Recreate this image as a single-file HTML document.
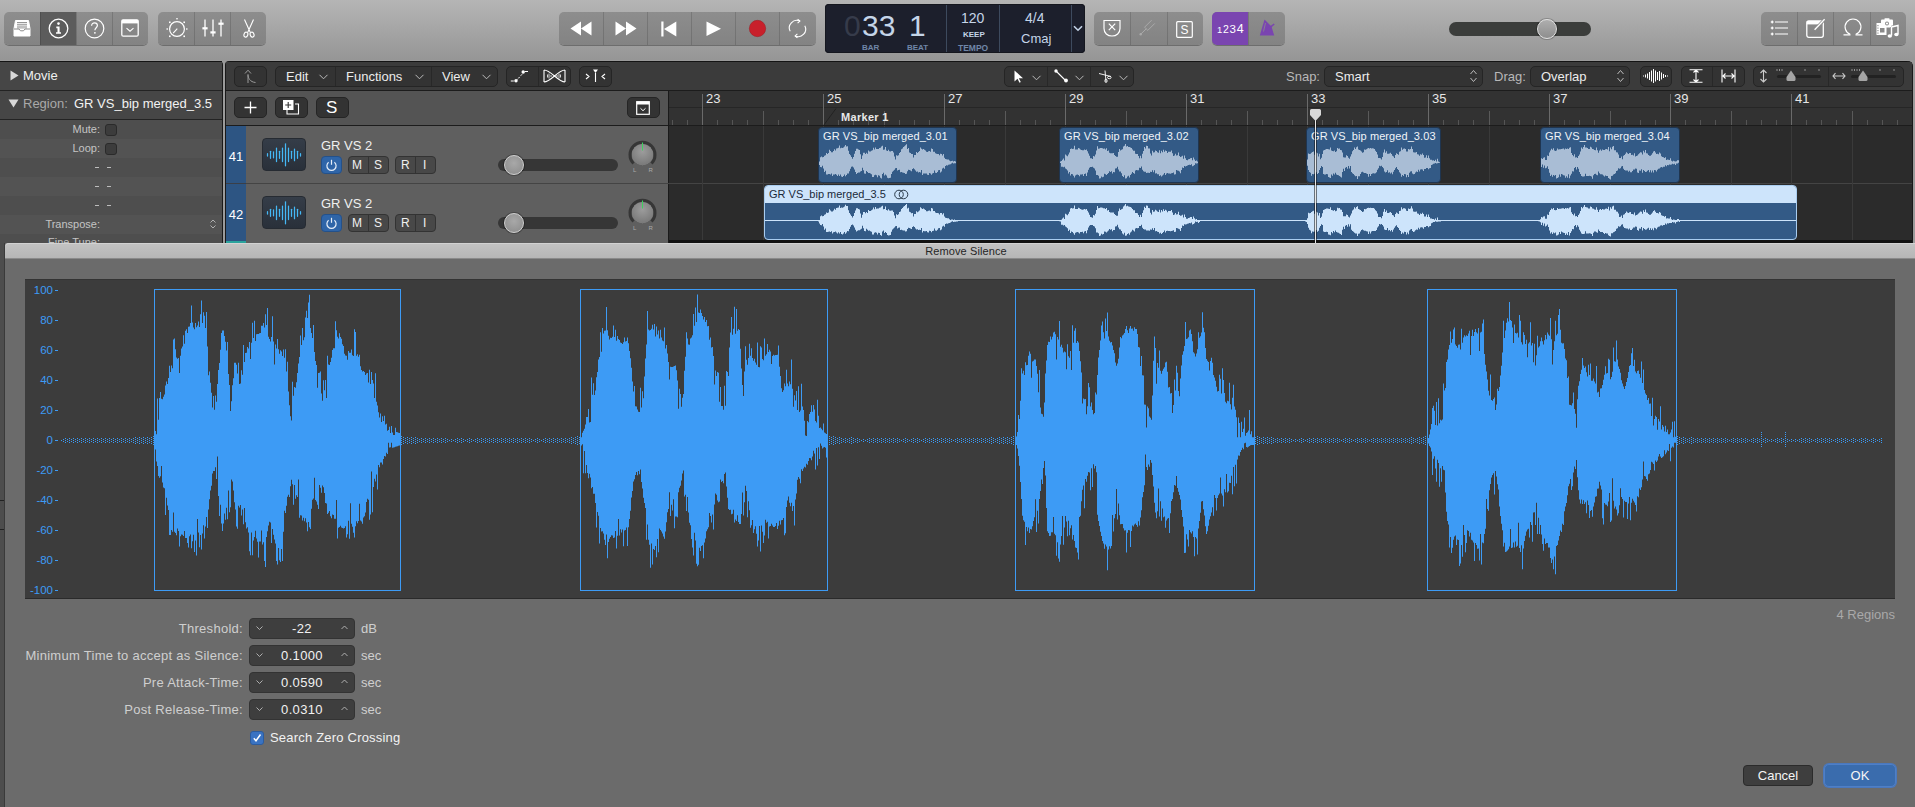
<!DOCTYPE html><html><head><meta charset="utf-8"><style>
*{margin:0;padding:0;box-sizing:border-box}
html,body{width:1915px;height:807px;overflow:hidden;background:#9b9b9b;font-family:"Liberation Sans",sans-serif}
.a{position:absolute}
.tg{position:absolute;border-radius:5px;background:linear-gradient(#8d8d8d,#838383);box-shadow:0 1px 0 rgba(0,0,0,.3)}
.tb{position:absolute;top:0;height:100%;border-left:1px solid rgba(0,0,0,.14)}
.tb:first-child{border-left:none}
.dbtn{position:absolute;border-radius:4px;background:#3a3a3a;border:1px solid #2a2a2a;box-shadow:inset 0 1px 0 rgba(255,255,255,.04)}
.t{position:absolute;white-space:nowrap;line-height:1}
svg{position:absolute;overflow:visible}
</style></head><body><div style="position:absolute;left:0px;top:0px;width:1915px;height:61px;background:linear-gradient(#b5b5b5,#959595)"></div><div class="tg" style="left:4px;top:12px;width:144px;height:33px;overflow:hidden"><div class="tb" style="left:0px;width:36px;"></div><div class="tb" style="left:36px;width:36px;background:#5c5c5c;"></div><div class="tb" style="left:72px;width:36px;"></div><div class="tb" style="left:108px;width:36px;"></div></div><div class="tg" style="left:158px;top:12px;width:108px;height:33px;overflow:hidden"><div class="tb" style="left:0px;width:36px;"></div><div class="tb" style="left:36px;width:36px;"></div><div class="tb" style="left:72px;width:36px;"></div></div><div class="tg" style="left:559px;top:12px;width:257px;height:33px;overflow:hidden"><div class="tb" style="left:0px;width:44px;"></div><div class="tb" style="left:44px;width:44px;"></div><div class="tb" style="left:88px;width:44px;"></div><div class="tb" style="left:132px;width:44px;"></div><div class="tb" style="left:176px;width:44px;"></div><div class="tb" style="left:220px;width:37px;"></div></div><div class="tg" style="left:1094px;top:12px;width:109px;height:33px;overflow:hidden"><div class="tb" style="left:0px;width:36px;"></div><div class="tb" style="left:36px;width:37px;"></div><div class="tb" style="left:73px;width:36px;"></div></div><div class="tg" style="left:1212px;top:12px;width:73px;height:33px;overflow:hidden"><div class="tb" style="left:0px;width:36px;background:#7a45b0;"></div><div class="tb" style="left:36px;width:37px;"></div></div><div class="tg" style="left:1761px;top:12px;width:145px;height:33px;overflow:hidden"><div class="tb" style="left:0px;width:36px;"></div><div class="tb" style="left:36px;width:36px;"></div><div class="tb" style="left:72px;width:37px;"></div><div class="tb" style="left:109px;width:36px;"></div></div><svg style="left:13px;top:19px" width="20" height="19" viewBox="0 0 20 19"><path d="M2.5 1.5h13l1.5 8v7.5h-16v-7.5z" fill="#fff" stroke="#fff" stroke-width="1" stroke-linejoin="round"/><path d="M4 3.5h10M4 5.3h10M4 7.1h10M4 8.9h10" stroke="#8a8a8a" stroke-width=".9"/><path d="M1 10h5l1.5 1.8h3l1.5-1.8h5" fill="none" stroke="#8a8a8a" stroke-width="1"/></svg><svg style="left:48px;top:18px" width="21" height="21" viewBox="0 0 21 21"><circle cx="10.5" cy="10.5" r="9.3" fill="none" stroke="#fff" stroke-width="1.3"/><circle cx="10.5" cy="5.6" r="1.3" fill="#fff"/><path d="M8.3 8.6h3.3v5.6h1.4v1.6H8v-1.6h1.5V10.2H8.3z" fill="#fff"/></svg><svg style="left:84px;top:18px" width="21" height="21" viewBox="0 0 21 21"><circle cx="10.5" cy="10.5" r="9.3" fill="none" stroke="#fff" stroke-width="1.2"/><path d="M7.6 7.8c0-1.9 1.3-3 2.9-3s2.9 1.1 2.9 2.8c0 2-2.5 2.3-2.5 4.6" fill="none" stroke="#fff" stroke-width="1.2"/><circle cx="10.9" cy="14.8" r=".9" fill="#fff"/></svg><svg style="left:121px;top:19px" width="18" height="18" viewBox="0 0 18 18"><rect x=".8" y=".8" width="16.4" height="16.4" rx="1.5" fill="none" stroke="#fff" stroke-width="1.3"/><rect x=".8" y=".8" width="16.4" height="3.6" fill="#fff"/><path d="M5.5 9.2l3.5 3 3.5-3" fill="none" stroke="#fff" stroke-width="1.1"/></svg><svg style="left:165px;top:17px" width="24" height="23" viewBox="0 0 24 23"><circle cx="12" cy="12" r="7.4" fill="none" stroke="#fff" stroke-width="1.2"/><path d="M8.2 16.2L12.3 11.7" stroke="#fff" stroke-width="1.1"/><g fill="#fff"><rect x="11.3" y="1" width="1.4" height="1.4"/><rect x="4" y="4.5" width="1.6" height="1.6"/><rect x="18.4" y="4.5" width="1.6" height="1.6"/><rect x="1.5" y="11.3" width="1.4" height="1.4"/><rect x="21.1" y="11.3" width="1.4" height="1.4"/><rect x="4" y="18.5" width="1.6" height="1.6"/><rect x="18.4" y="18.5" width="1.6" height="1.6"/></g></svg><svg style="left:201px;top:19px" width="22" height="19" viewBox="0 0 22 19"><g stroke="#fff" stroke-width="1.3"><path d="M4 .5v17M12 .5v17M20 .5v17"/></g><g fill="#fff"><rect x="1.4" y="8.2" width="5.2" height="2.2"/><rect x="9.4" y="12.3" width="5.2" height="2.2"/><rect x="17.4" y="3.6" width="5.2" height="2.2"/></g></svg><svg style="left:242px;top:19px" width="14" height="19" viewBox="0 0 14 19"><path d="M2.5 .5L8.2 13.3M11.5 .5L5.8 13.3" stroke="#fff" stroke-width="1.1" fill="none"/><ellipse cx="3.9" cy="15.6" rx="1.9" ry="2.5" fill="none" stroke="#fff" stroke-width="1.1" transform="rotate(20 3.9 15.6)"/><ellipse cx="10.1" cy="15.6" rx="1.9" ry="2.5" fill="none" stroke="#fff" stroke-width="1.1" transform="rotate(-20 10.1 15.6)"/></svg><svg style="left:570px;top:21px" width="22" height="15" viewBox="0 0 22 15"><path d="M11 .5v14L.5 7.5zM21.5 .5v14L11 7.5z" fill="#fff"/></svg><svg style="left:615px;top:21px" width="22" height="15" viewBox="0 0 22 15"><path d="M.5 .5v14L11 7.5zM11 .5v14l10.5-7z" fill="#fff"/></svg><svg style="left:661px;top:21px" width="16" height="16" viewBox="0 0 16 16"><rect x=".3" y=".5" width="2.2" height="15" fill="#fff"/><path d="M15.3 .5v15L3 8z" fill="#fff"/></svg><svg style="left:706px;top:21px" width="15" height="15" viewBox="0 0 15 15"><path d="M.5 .5v14.5L15 7.7z" fill="#fff"/></svg><svg style="left:749px;top:20px" width="17" height="17" viewBox="0 0 17 17"><circle cx="8.5" cy="8.5" r="8.2" fill="#c8202b" stroke="#9a1820" stroke-width=".5"/></svg><svg style="left:787px;top:18px" width="21" height="21" viewBox="0 0 21 21"><path d="M3.2 13.3A7.4 7.4 0 0 1 12.8 3.1M17.8 7.7a7.4 7.4 0 0 1-9.6 10.2" fill="none" stroke="#fff" stroke-width="1.1"/><path d="M10.6 1.1l2.3 2-2.3 2M10.4 15.9l-2.3 2 2.3 2" fill="none" stroke="#fff" stroke-width="1.1"/></svg><svg style="left:1103px;top:19px" width="18" height="18" viewBox="0 0 18 18"><path d="M1 1.5h16v8c0 4.5-3.5 7.5-8 7.5s-8-3-8-7.5z" fill="none" stroke="#fff" stroke-width="1.2"/><path d="M5.8 4.7l6.4 6.4M12.2 4.7l-6.4 6.4" stroke="#fff" stroke-width="1.2"/></svg><svg style="left:1139px;top:18px" width="18" height="19" viewBox="0 0 18 19"><path d="M1.3 16.6L7.2 10.8M7.2 10.8L5.6 9.2 12.6 2.2M7.2 10.8L8.8 12.4 15.8 5.4" fill="none" stroke="#aaa" stroke-width="1"/><circle cx="1.7" cy="16.3" r="1.2" fill="#aaa"/></svg><svg style="left:1176px;top:21px" width="17" height="17" viewBox="0 0 17 17"><rect x=".7" y=".7" width="15.6" height="15.6" rx="1" fill="none" stroke="#fff" stroke-width="1.2"/><text x="8.5" y="12.6" text-anchor="middle" font-family="Liberation Sans" font-size="12" fill="#fff">S</text></svg><div class="t" style="left:1217px;top:23px;font-size:9.5px;color:#fff;letter-spacing:.7px">1<span style="font-size:10.5px">2</span><span style="font-size:11.5px">3</span><span style="font-size:12.5px;letter-spacing:0">4</span></div><svg style="left:1259px;top:19px" width="16" height="17" viewBox="0 0 16 17"><path d="M5.5 .5L.8 16.5h14.4L12.5 7.4z" fill="#7a45b0"/><path d="M6 12.5L15.2 5" stroke="#7a45b0" stroke-width="1.6"/><path d="M6.5 4l-2 8.5" stroke="#8a8a8a" stroke-width=".8"/></svg><svg style="left:1770px;top:20px" width="19" height="16" viewBox="0 0 19 16"><g fill="#fff"><path d="M1.5 1.3h1.4v1.4H1.5zM1.5 7.3h1.4v1.4H1.5zM1.5 13.3h1.4v1.4H1.5z" transform="translate(0 0)"/><rect x=".7" y="1.5" width="3" height="1" /><rect x="1.7" y=".5" width="1" height="3"/><rect x=".7" y="7.5" width="3" height="1"/><rect x="1.7" y="6.5" width="1" height="3"/><rect x=".7" y="13.5" width="3" height="1"/><rect x="1.7" y="12.5" width="1" height="3"/></g><path d="M5 2h13M5 8h13M5 14h13" stroke="#fff" stroke-width="1.2"/></svg><svg style="left:1806px;top:18px" width="20" height="20" viewBox="0 0 20 20"><rect x=".8" y="3" width="16.5" height="16.3" rx="2" fill="none" stroke="#fff" stroke-width="1.3"/><rect x=".8" y="3" width="15" height="3.4" fill="#fff"/><path d="M8.5 12L18.5 1.5" stroke="#8a8a8a" stroke-width="3.2"/><path d="M8.6 11.8L18.6 1.3" stroke="#fff" stroke-width="1.3"/></svg><svg style="left:1843px;top:18px" width="20" height="18" viewBox="0 0 20 18"><path d="M7.2 16.3A7.9 7.9 0 1 1 12.8 16.3" fill="none" stroke="#fff" stroke-width="1.2"/><path d="M.5 16.8h7M12.5 16.8h7" stroke="#fff" stroke-width="1.2"/></svg><svg style="left:1876px;top:18px" width="24" height="21" viewBox="0 0 24 21"><g fill="#fff"><rect x=".5" y="5" width="10" height="12"/><rect x="5" y="1.6" width="12" height="7.8" rx="1"/><rect x="8.5" y=".2" width="5" height="2.5" rx=".6"/></g><circle cx="11" cy="5.5" r="2" fill="#8a8a8a"/><circle cx="11" cy="5.5" r="1.1" fill="#fff"/><g fill="#8a8a8a"><rect x="1.4" y="7" width="1.1" height="1.2"/><rect x="1.4" y="9.5" width="1.1" height="1.2"/><rect x="1.4" y="12" width="1.1" height="1.2"/><rect x="1.4" y="14.5" width="1.1" height="1.2"/><rect x="4" y="10" width="4.5" height="4.5"/></g><path d="M15.5 9v8.5M15.5 9l6.5-1.5V16" fill="none" stroke="#8a8a8a" stroke-width="2.6"/><path d="M15.5 9v8.5M15.5 9l6.5-1.5V16" fill="none" stroke="#fff" stroke-width="1.4"/><ellipse cx="13.8" cy="18" rx="2.2" ry="1.7" fill="#fff"/><ellipse cx="20.4" cy="16.5" rx="2.2" ry="1.7" fill="#fff"/></svg><div class="a" style="left:825px;top:4px;width:260px;height:49px;border-radius:4px;background:#1c1f2c;box-shadow:inset 0 0 0 1px #15171f"></div><div class="a" style="left:946px;top:5px;width:1px;height:47px;background:#3d4a5e"></div><div class="a" style="left:999px;top:5px;width:1px;height:47px;background:#3d4a5e"></div><div class="a" style="left:1071px;top:5px;width:1px;height:47px;background:#3d4a5e"></div><div class="t" style="left:844px;top:11px;font-size:30px;color:#363b4a">0</div><div class="t" style="left:862px;top:11px;font-size:30px;color:#c5d5e8">33</div><div class="t" style="left:909px;top:11px;font-size:30px;color:#c5d5e8">1</div><div class="t" style="left:862px;top:44px;font-size:8px;font-weight:bold;color:#6f86a8">BAR</div><div class="t" style="left:907px;top:44px;font-size:8px;font-weight:bold;color:#6f86a8">BEAT</div><div class="t" style="left:961px;top:11px;font-size:14px;color:#c5d5e8">120</div><div class="t" style="left:963px;top:31px;font-size:8px;font-weight:bold;color:#c5d5e8">KEEP</div><div class="t" style="left:958px;top:44px;font-size:8.5px;font-weight:bold;color:#6f86a8">TEMPO</div><div class="t" style="left:1025px;top:11px;font-size:14px;color:#c5d5e8">4/4</div><div class="t" style="left:1021px;top:32px;font-size:13px;color:#c5d5e8">Cmaj</div><svg style="left:1073px;top:25px" width="10" height="7" viewBox="0 0 10 7"><path d="M1 1.2l4 4 4-4" fill="none" stroke="#c5d5e8" stroke-width="1.6"/></svg><div style="position:absolute;left:1449px;top:22px;width:142px;height:14px;border-radius:7px;background:#3b3d3b"></div><div style="position:absolute;left:1537px;top:19px;width:20px;height:20px;border-radius:50%;background:linear-gradient(#aeaeae,#8e8e8e);border:1px solid #e0e0e0;box-shadow:0 0 0 1px rgba(0,0,0,.2)"></div><div style="position:absolute;left:0px;top:61px;width:223px;height:182px;background:#4a4a4a;border-right:1px solid #1a1a1a;border-top-right-radius:4px;overflow:hidden"></div><div style="position:absolute;left:0px;top:62px;width:222px;height:28px;background:#464646"></div><div style="position:absolute;left:0px;top:90px;width:222px;height:1px;background:#232323"></div><div style="position:absolute;left:0px;top:91px;width:222px;height:28px;background:#464646"></div><div style="position:absolute;left:0px;top:119px;width:222px;height:1px;background:#232323"></div><div style="position:absolute;left:0px;top:120px;width:222px;height:19px;background:#4e4e4e"></div><div style="position:absolute;left:0px;top:139px;width:222px;height:19px;background:#535353"></div><div style="position:absolute;left:0px;top:158px;width:222px;height:19px;background:#4e4e4e"></div><div style="position:absolute;left:0px;top:177px;width:222px;height:19px;background:#535353"></div><div style="position:absolute;left:0px;top:196px;width:222px;height:19px;background:#4e4e4e"></div><div style="position:absolute;left:0px;top:215px;width:222px;height:19px;background:#535353"></div><div style="position:absolute;left:0px;top:234px;width:222px;height:19px;background:#4e4e4e"></div><svg style="left:10px;top:70px" width="9" height="11" viewBox="0 0 9 11"><path d="M.5 .5L8.5 5.5.5 10.5z" fill="#d8d8d8"/></svg><div class="t" style="left:23px;top:69px;font-size:13px;color:#f0f0f0;">Movie</div><svg style="left:8px;top:99px" width="11" height="9" viewBox="0 0 11 9"><path d="M.5 .5h10L5.5 8.5z" fill="#d8d8d8"/></svg><div class="t" style="left:23px;top:97px;font-size:13px;color:#a9a9a9;">Region:</div><div class="t" style="left:74px;top:97px;font-size:13px;color:#f2f2f2;">GR VS_bip merged_3.5</div><div class="t" style="right:1815px;top:124px;font-size:11px;color:#c4c4c4">Mute:</div><div style="position:absolute;left:105px;top:124px;width:12px;height:12px;border-radius:3px;background:#3c3c3c;border:1px solid #2a2a2a"></div><div class="t" style="right:1815px;top:143px;font-size:11px;color:#c4c4c4">Loop:</div><div style="position:absolute;left:105px;top:143px;width:12px;height:12px;border-radius:3px;background:#3c3c3c;border:1px solid #2a2a2a"></div><div style="position:absolute;left:95px;top:167px;width:4px;height:1px;background:#bdbdbd"></div><div style="position:absolute;left:107px;top:167px;width:4px;height:1px;background:#bdbdbd"></div><div style="position:absolute;left:95px;top:186px;width:4px;height:1px;background:#bdbdbd"></div><div style="position:absolute;left:107px;top:186px;width:4px;height:1px;background:#bdbdbd"></div><div style="position:absolute;left:95px;top:205px;width:4px;height:1px;background:#bdbdbd"></div><div style="position:absolute;left:107px;top:205px;width:4px;height:1px;background:#bdbdbd"></div><div class="t" style="right:1815px;top:219px;font-size:11px;color:#c4c4c4">Transpose:</div><svg style="left:210px;top:219px" width="6" height="10" viewBox="0 0 6 10"><path d="M.5 3.5L3 1l2.5 2.5M.5 6.5L3 9l2.5-2.5" fill="none" stroke="#bbb" stroke-width=".9"/></svg><div class="t" style="right:1815px;top:237px;font-size:11px;color:#c4c4c4">Fine Tune:</div><div style="position:absolute;left:225px;top:61px;width:1688px;height:182px;background:#2b2b2b;border-left:1px solid #1a1a1a;border-right:1px solid #1a1a1a;border-top:1px solid #1a1a1a;border-top-left-radius:4px;border-top-right-radius:5px;overflow:hidden"></div><div style="position:absolute;left:226px;top:62px;width:1686px;height:28px;background:#3b3b3b"></div><div style="position:absolute;left:0px;top:60px;width:1915px;height:1px;background:#9a9a9a"></div><div style="position:absolute;left:0px;top:61px;width:222px;height:1px;background:#141414"></div><div style="position:absolute;left:230px;top:61px;width:1677px;height:1px;background:#141414"></div><div style="position:absolute;left:226px;top:90px;width:1686px;height:1px;background:#1c1c1c"></div><div style="position:absolute;left:226px;top:91px;width:442px;height:34px;background:#545454"></div><div style="position:absolute;left:226px;top:125px;width:1686px;height:1px;background:#1c1c1c"></div><div style="position:absolute;left:668px;top:91px;width:1px;height:152px;background:#1a1a1a"></div><div style="position:absolute;left:669px;top:91px;width:1243px;height:34px;background:#323232"></div><div style="position:absolute;left:669px;top:107px;width:1243px;height:1px;background:#262626"></div><div class="a" style="left:234px;top:66px;width:33px;height:21px;border-radius:5px;background:#333333;border:1px solid #252525;"></div><svg style="left:244px;top:69px" width="13" height="15" viewBox="0 0 13 15"><path d="M4 14V5.5C4 9 6 13 11.5 13.5" fill="none" stroke="#9a9a9a" stroke-width="1"/><path d="M1 4.5L4 1.2 7 4.5" fill="none" stroke="#9a9a9a" stroke-width="1"/></svg><div class="a" style="left:275px;top:66px;width:223px;height:21px;border-radius:5px;background:#333333;border:1px solid #252525;"></div><div style="position:absolute;left:335px;top:67px;width:1px;height:19px;background:#282828"></div><div style="position:absolute;left:431px;top:67px;width:1px;height:19px;background:#282828"></div><div class="t" style="left:286px;top:70px;font-size:13px;color:#ececec;">Edit</div><svg style="left:319px;top:74px" width="9" height="6" viewBox="0 0 9 6"><path d="M.5 .8l4 4 4-4" fill="none" stroke="#bbb" stroke-width="1"/></svg><div class="t" style="left:346px;top:70px;font-size:13px;color:#ececec;">Functions</div><svg style="left:415px;top:74px" width="9" height="6" viewBox="0 0 9 6"><path d="M.5 .8l4 4 4-4" fill="none" stroke="#bbb" stroke-width="1"/></svg><div class="t" style="left:442px;top:70px;font-size:13px;color:#ececec;">View</div><svg style="left:482px;top:74px" width="9" height="6" viewBox="0 0 9 6"><path d="M.5 .8l4 4 4-4" fill="none" stroke="#bbb" stroke-width="1"/></svg><div class="a" style="left:506px;top:66px;width:65px;height:21px;border-radius:5px;background:#333333;border:1px solid #252525;"></div><div style="position:absolute;left:538px;top:67px;width:1px;height:19px;background:#282828"></div><svg style="left:510px;top:70px" width="24" height="13" viewBox="0 0 24 13"><path d="M.8 11h3M15 1.5h3" stroke="#fff" stroke-width="1.1"/><path d="M6 11l8.5-9.5" stroke="#fff" stroke-width="1" stroke-dasharray="2 1.5"/><circle cx="6" cy="10.7" r="1.7" fill="#fff"/><circle cx="13.2" cy="2" r="1.7" fill="#fff"/></svg><svg style="left:543px;top:69px" width="23" height="14" viewBox="0 0 23 14"><path d="M1 1v12M22 1v12M1 1c7 0 14 12 21 12M1 13c7 0 14-12 21-12" fill="none" stroke="#fff" stroke-width="1.1"/><path d="M4.5 5.5v3M6 4.5v5M8 6v2M14 6v2M16 4.5v5M17.5 5.5v3" stroke="#fff" stroke-width=".8"/></svg><div class="a" style="left:579px;top:66px;width:33px;height:21px;border-radius:5px;background:#333333;border:1px solid #252525;"></div><svg style="left:585px;top:69px" width="21" height="13" viewBox="0 0 21 13"><path d="M1 5l3 2.5-3 2.5M20 5l-3 2.5 3 2.5" fill="none" stroke="#fff" stroke-width="1.1"/><path d="M10.5 4v9" stroke="#fff" stroke-width="1.1"/><path d="M8 .5h5l-2.5 3.5z" fill="#fff"/></svg><div class="a" style="left:1004px;top:66px;width:130px;height:21px;border-radius:5px;background:#333333;border:1px solid #252525;"></div><div style="position:absolute;left:1047px;top:67px;width:1px;height:19px;background:#282828"></div><div style="position:absolute;left:1090px;top:67px;width:1px;height:19px;background:#282828"></div><svg style="left:1014px;top:70px" width="9" height="13" viewBox="0 0 9 13"><path d="M.5.5v11l3-2.8 2 4 1.3-.6-2-3.9H9z" fill="#fff"/></svg><svg style="left:1032px;top:75px" width="9" height="6" viewBox="0 0 9 6"><path d="M.5 .8l4 4 4-4" fill="none" stroke="#bbb" stroke-width="1"/></svg><svg style="left:1054px;top:69px" width="15" height="14" viewBox="0 0 15 14"><path d="M2 2l10 10" stroke="#fff" stroke-width="1.1"/><circle cx="2" cy="2" r="1.7" fill="#fff"/><circle cx="12" cy="11.5" r="1.9" fill="#fff"/></svg><svg style="left:1075px;top:75px" width="9" height="6" viewBox="0 0 9 6"><path d="M.5 .8l4 4 4-4" fill="none" stroke="#bbb" stroke-width="1"/></svg><svg style="left:1098px;top:69px" width="15" height="14" viewBox="0 0 15 14"><path d="M1 4.5l12 3M7 1.5l1 11" stroke="#fff" stroke-width=".9"/><ellipse cx="11.3" cy="8.5" rx="1.8" ry="1.2" fill="none" stroke="#fff" stroke-width=".9"/><ellipse cx="8" cy="11.8" rx="1.1" ry="1.7" fill="none" stroke="#fff" stroke-width=".9"/></svg><svg style="left:1119px;top:75px" width="9" height="6" viewBox="0 0 9 6"><path d="M.5 .8l4 4 4-4" fill="none" stroke="#bbb" stroke-width="1"/></svg><div class="t" style="left:1286px;top:70px;font-size:13px;color:#b8b8b8;">Snap:</div><div class="a" style="left:1324px;top:66px;width:159px;height:21px;border-radius:5px;background:#333333;border:1px solid #252525;"></div><div class="t" style="left:1335px;top:70px;font-size:13px;color:#ececec;">Smart</div><svg style="left:1470px;top:69px" width="7" height="14" viewBox="0 0 7 14"><path d="M.5 5L3.5 1.5 6.5 5M.5 9l3 3.5 3-3.5" fill="none" stroke="#bbb" stroke-width="1"/></svg><div class="t" style="left:1494px;top:70px;font-size:13px;color:#b8b8b8;">Drag:</div><div class="a" style="left:1530px;top:66px;width:100px;height:21px;border-radius:5px;background:#333333;border:1px solid #252525;"></div><div class="t" style="left:1541px;top:70px;font-size:13px;color:#ececec;">Overlap</div><svg style="left:1617px;top:69px" width="7" height="14" viewBox="0 0 7 14"><path d="M.5 5L3.5 1.5 6.5 5M.5 9l3 3.5 3-3.5" fill="none" stroke="#bbb" stroke-width="1"/></svg><div class="a" style="left:1640px;top:66px;width:32px;height:21px;border-radius:5px;background:#333333;border:1px solid #252525;"></div><svg style="left:1643px;top:69px" width="26" height="14" viewBox="0 0 26 14"><path d="M0.5 6.5v1M2.5 5.5v3M4.5 4.5v5M6.5 3.0v8M8.5 1.5v11M10.5 0.0v14M12.5 1.5v11M14.5 3.0v8M16.5 2.0v10M18.5 3.5v7M20.5 5.0v4M22.5 6.0v2M24.5 6.5v1" stroke="#fff" stroke-width="1"/></svg><div class="a" style="left:1681px;top:66px;width:64px;height:21px;border-radius:5px;background:#333333;border:1px solid #252525;"></div><div style="position:absolute;left:1712px;top:67px;width:1px;height:19px;background:#282828"></div><svg style="left:1689px;top:69px" width="14" height="14" viewBox="0 0 14 14"><path d="M.5 .8h13M.5 13.2h13M7 1v12M4.5 3.5L7 1l2.5 2.5M4.5 10.5L7 13l2.5-2.5" fill="none" stroke="#fff" stroke-width="1.1"/></svg><svg style="left:1721px;top:69px" width="15" height="14" viewBox="0 0 15 14"><path d="M1 .5v13M14 .5v13M2 7h11M4.5 4.5L2 7l2.5 2.5M10.5 4.5L13 7l-2.5 2.5" fill="none" stroke="#fff" stroke-width="1.1"/></svg><div class="a" style="left:1753px;top:66px;width:151px;height:21px;border-radius:5px;background:#333333;border:1px solid #252525;"></div><div style="position:absolute;left:1828px;top:67px;width:1px;height:19px;background:#282828"></div><svg style="left:1759px;top:69px" width="9" height="14" viewBox="0 0 9 14"><path d="M4.5 1v12M1.5 4L4.5 1l3 3M1.5 10l3 3 3-3" fill="none" stroke="#ccc" stroke-width="1.1"/></svg><div style="position:absolute;left:1777px;top:75px;width:44px;height:3px;border-radius:2px;background:#222"></div><svg style="left:1776px;top:68px" width="46" height="6" viewBox="0 0 46 6"><path d="M1 1v2M3.5 1v2M6 1v2M29 1v2M43 1v2" stroke="#aaa" stroke-width=".8"/></svg><svg style="left:1786px;top:70px" width="10" height="12" viewBox="0 0 10 12"><path d="M5 .5L9.5 7v2.5a1.5 1.5 0 0 1-1.5 1.5H2A1.5 1.5 0 0 1 .5 9.5V7z" fill="#a5a5a5"/></svg><svg style="left:1832px;top:72px" width="14" height="8" viewBox="0 0 14 8"><path d="M1 4h12M3.5 1.2L1 4l2.5 2.8M10.5 1.2L13 4l-2.5 2.8" fill="none" stroke="#ccc" stroke-width="1.1"/></svg><div style="position:absolute;left:1851px;top:75px;width:45px;height:3px;border-radius:2px;background:#222"></div><svg style="left:1851px;top:68px" width="46" height="6" viewBox="0 0 46 6"><path d="M1 1v2M3.5 1v2M6 1v2M8.5 1v2M29 1v2M43 1v2" stroke="#aaa" stroke-width=".8"/></svg><svg style="left:1858px;top:70px" width="10" height="12" viewBox="0 0 10 12"><path d="M5 .5L9.5 7v2.5a1.5 1.5 0 0 1-1.5 1.5H2A1.5 1.5 0 0 1 .5 9.5V7z" fill="#a5a5a5"/></svg><div class="a" style="left:234px;top:97px;width:33px;height:21px;border-radius:5px;background:#333333;border:1px solid #252525;"></div><svg style="left:243px;top:100px" width="15" height="15" viewBox="0 0 15 15"><path d="M7.5 1.5v12M1.5 7.5h12" stroke="#fff" stroke-width="1.3"/></svg><div class="a" style="left:275px;top:97px;width:33px;height:21px;border-radius:5px;background:#333333;border:1px solid #252525;"></div><svg style="left:282px;top:99px" width="18" height="16" viewBox="0 0 18 16"><path d="M5 8.5v6.5h11.5V5H13" fill="none" stroke="#fff" stroke-width="1.1"/><rect x="1" y="1" width="10.5" height="10" fill="#fff"/><path d="M6.2 3v6M3.2 6h6" stroke="#333" stroke-width="1.1"/></svg><div class="a" style="left:316px;top:97px;width:33px;height:21px;border-radius:5px;background:#333333;border:1px solid #252525;"></div><div class="t" style="left:326px;top:99px;font-size:17px;color:#fff;">S</div><div class="a" style="left:627px;top:97px;width:33px;height:21px;border-radius:5px;background:#333333;border:1px solid #252525;"></div><svg style="left:636px;top:101px" width="14" height="14" viewBox="0 0 14 14"><rect x=".7" y=".7" width="12.6" height="12.6" fill="none" stroke="#fff" stroke-width="1.2"/><rect x=".7" y=".7" width="12.6" height="2.8" fill="#fff"/><path d="M4.5 7.3l2.5 2.4 2.5-2.4" fill="none" stroke="#fff" stroke-width="1"/></svg><div style="position:absolute;left:702px;top:94px;width:1px;height:31px;background:#6a6a6a"></div><div class="t" style="left:706px;top:92px;font-size:13px;color:#e6e6e6;">23</div><div style="position:absolute;left:763px;top:111px;width:1px;height:14px;background:#5a5a5a"></div><div style="position:absolute;left:823px;top:94px;width:1px;height:31px;background:#6a6a6a"></div><div class="t" style="left:827px;top:92px;font-size:13px;color:#e6e6e6;">25</div><div style="position:absolute;left:884px;top:111px;width:1px;height:14px;background:#5a5a5a"></div><div style="position:absolute;left:944px;top:94px;width:1px;height:31px;background:#6a6a6a"></div><div class="t" style="left:948px;top:92px;font-size:13px;color:#e6e6e6;">27</div><div style="position:absolute;left:1005px;top:111px;width:1px;height:14px;background:#5a5a5a"></div><div style="position:absolute;left:1065px;top:94px;width:1px;height:31px;background:#6a6a6a"></div><div class="t" style="left:1069px;top:92px;font-size:13px;color:#e6e6e6;">29</div><div style="position:absolute;left:1126px;top:111px;width:1px;height:14px;background:#5a5a5a"></div><div style="position:absolute;left:1186px;top:94px;width:1px;height:31px;background:#6a6a6a"></div><div class="t" style="left:1190px;top:92px;font-size:13px;color:#e6e6e6;">31</div><div style="position:absolute;left:1247px;top:111px;width:1px;height:14px;background:#5a5a5a"></div><div style="position:absolute;left:1307px;top:94px;width:1px;height:31px;background:#6a6a6a"></div><div class="t" style="left:1311px;top:92px;font-size:13px;color:#e6e6e6;">33</div><div style="position:absolute;left:1368px;top:111px;width:1px;height:14px;background:#5a5a5a"></div><div style="position:absolute;left:1428px;top:94px;width:1px;height:31px;background:#6a6a6a"></div><div class="t" style="left:1432px;top:92px;font-size:13px;color:#e6e6e6;">35</div><div style="position:absolute;left:1489px;top:111px;width:1px;height:14px;background:#5a5a5a"></div><div style="position:absolute;left:1549px;top:94px;width:1px;height:31px;background:#6a6a6a"></div><div class="t" style="left:1553px;top:92px;font-size:13px;color:#e6e6e6;">37</div><div style="position:absolute;left:1610px;top:111px;width:1px;height:14px;background:#5a5a5a"></div><div style="position:absolute;left:1670px;top:94px;width:1px;height:31px;background:#6a6a6a"></div><div class="t" style="left:1674px;top:92px;font-size:13px;color:#e6e6e6;">39</div><div style="position:absolute;left:1731px;top:111px;width:1px;height:14px;background:#5a5a5a"></div><div style="position:absolute;left:1791px;top:94px;width:1px;height:31px;background:#6a6a6a"></div><div class="t" style="left:1795px;top:92px;font-size:13px;color:#e6e6e6;">41</div><div style="position:absolute;left:1852px;top:111px;width:1px;height:14px;background:#5a5a5a"></div><div style="position:absolute;left:672px;top:120px;width:1px;height:5px;background:#555"></div><div style="position:absolute;left:687px;top:120px;width:1px;height:5px;background:#555"></div><div style="position:absolute;left:717px;top:120px;width:1px;height:5px;background:#555"></div><div style="position:absolute;left:732px;top:120px;width:1px;height:5px;background:#555"></div><div style="position:absolute;left:747px;top:120px;width:1px;height:5px;background:#555"></div><div style="position:absolute;left:778px;top:120px;width:1px;height:5px;background:#555"></div><div style="position:absolute;left:793px;top:120px;width:1px;height:5px;background:#555"></div><div style="position:absolute;left:808px;top:120px;width:1px;height:5px;background:#555"></div><div style="position:absolute;left:838px;top:120px;width:1px;height:5px;background:#555"></div><div style="position:absolute;left:853px;top:120px;width:1px;height:5px;background:#555"></div><div style="position:absolute;left:868px;top:120px;width:1px;height:5px;background:#555"></div><div style="position:absolute;left:899px;top:120px;width:1px;height:5px;background:#555"></div><div style="position:absolute;left:914px;top:120px;width:1px;height:5px;background:#555"></div><div style="position:absolute;left:929px;top:120px;width:1px;height:5px;background:#555"></div><div style="position:absolute;left:959px;top:120px;width:1px;height:5px;background:#555"></div><div style="position:absolute;left:974px;top:120px;width:1px;height:5px;background:#555"></div><div style="position:absolute;left:989px;top:120px;width:1px;height:5px;background:#555"></div><div style="position:absolute;left:1020px;top:120px;width:1px;height:5px;background:#555"></div><div style="position:absolute;left:1035px;top:120px;width:1px;height:5px;background:#555"></div><div style="position:absolute;left:1050px;top:120px;width:1px;height:5px;background:#555"></div><div style="position:absolute;left:1080px;top:120px;width:1px;height:5px;background:#555"></div><div style="position:absolute;left:1095px;top:120px;width:1px;height:5px;background:#555"></div><div style="position:absolute;left:1110px;top:120px;width:1px;height:5px;background:#555"></div><div style="position:absolute;left:1141px;top:120px;width:1px;height:5px;background:#555"></div><div style="position:absolute;left:1156px;top:120px;width:1px;height:5px;background:#555"></div><div style="position:absolute;left:1171px;top:120px;width:1px;height:5px;background:#555"></div><div style="position:absolute;left:1201px;top:120px;width:1px;height:5px;background:#555"></div><div style="position:absolute;left:1216px;top:120px;width:1px;height:5px;background:#555"></div><div style="position:absolute;left:1231px;top:120px;width:1px;height:5px;background:#555"></div><div style="position:absolute;left:1262px;top:120px;width:1px;height:5px;background:#555"></div><div style="position:absolute;left:1277px;top:120px;width:1px;height:5px;background:#555"></div><div style="position:absolute;left:1292px;top:120px;width:1px;height:5px;background:#555"></div><div style="position:absolute;left:1322px;top:120px;width:1px;height:5px;background:#555"></div><div style="position:absolute;left:1337px;top:120px;width:1px;height:5px;background:#555"></div><div style="position:absolute;left:1352px;top:120px;width:1px;height:5px;background:#555"></div><div style="position:absolute;left:1383px;top:120px;width:1px;height:5px;background:#555"></div><div style="position:absolute;left:1398px;top:120px;width:1px;height:5px;background:#555"></div><div style="position:absolute;left:1413px;top:120px;width:1px;height:5px;background:#555"></div><div style="position:absolute;left:1443px;top:120px;width:1px;height:5px;background:#555"></div><div style="position:absolute;left:1458px;top:120px;width:1px;height:5px;background:#555"></div><div style="position:absolute;left:1473px;top:120px;width:1px;height:5px;background:#555"></div><div style="position:absolute;left:1504px;top:120px;width:1px;height:5px;background:#555"></div><div style="position:absolute;left:1519px;top:120px;width:1px;height:5px;background:#555"></div><div style="position:absolute;left:1534px;top:120px;width:1px;height:5px;background:#555"></div><div style="position:absolute;left:1564px;top:120px;width:1px;height:5px;background:#555"></div><div style="position:absolute;left:1579px;top:120px;width:1px;height:5px;background:#555"></div><div style="position:absolute;left:1594px;top:120px;width:1px;height:5px;background:#555"></div><div style="position:absolute;left:1625px;top:120px;width:1px;height:5px;background:#555"></div><div style="position:absolute;left:1640px;top:120px;width:1px;height:5px;background:#555"></div><div style="position:absolute;left:1655px;top:120px;width:1px;height:5px;background:#555"></div><div style="position:absolute;left:1685px;top:120px;width:1px;height:5px;background:#555"></div><div style="position:absolute;left:1700px;top:120px;width:1px;height:5px;background:#555"></div><div style="position:absolute;left:1715px;top:120px;width:1px;height:5px;background:#555"></div><div style="position:absolute;left:1746px;top:120px;width:1px;height:5px;background:#555"></div><div style="position:absolute;left:1761px;top:120px;width:1px;height:5px;background:#555"></div><div style="position:absolute;left:1776px;top:120px;width:1px;height:5px;background:#555"></div><div style="position:absolute;left:1806px;top:120px;width:1px;height:5px;background:#555"></div><div style="position:absolute;left:1821px;top:120px;width:1px;height:5px;background:#555"></div><div style="position:absolute;left:1836px;top:120px;width:1px;height:5px;background:#555"></div><div style="position:absolute;left:1867px;top:120px;width:1px;height:5px;background:#555"></div><div style="position:absolute;left:1882px;top:120px;width:1px;height:5px;background:#555"></div><div style="position:absolute;left:1897px;top:120px;width:1px;height:5px;background:#555"></div><svg style="left:823px;top:108px" width="14" height="18" viewBox="0 0 14 18"><path d="M.5 17.5L13 .5" stroke="#222" stroke-width="1"/></svg><div class="t" style="left:841px;top:112px;font-size:11px;color:#e8e8e8;font-weight:bold;letter-spacing:.3px">Marker 1</div><svg width="0" height="0" style="position:absolute"><defs><radialGradient id="kg" cx="50%" cy="35%" r="70%"><stop offset="0" stop-color="#9c9c9c"/><stop offset="1" stop-color="#767676"/></radialGradient></defs></svg><div style="position:absolute;left:226px;top:126px;width:442px;height:117px;background:#5f5f5f"></div><div style="position:absolute;left:226px;top:183px;width:1686px;height:1px;background:#444"></div><div style="position:absolute;left:226px;top:126px;width:20px;height:117px;background:#2d5583"></div><div style="position:absolute;left:226px;top:183px;width:20px;height:1px;background:#3a3f48"></div><div style="position:absolute;left:226px;top:241px;width:20px;height:2px;background:#2aa39c"></div><div class="t" style="left:226px;width:20px;text-align:center;top:150px;font-size:13px;color:#fff">41</div><div style="position:absolute;left:262px;top:138px;width:44px;height:33px;border-radius:4px;background:linear-gradient(#353d48,#29303a);border:1px solid #262b32"></div><svg style="left:262px;top:138px" width="44" height="33" viewBox="0 0 44 33"><path d="M5.5 15.7v2.3" stroke="#45b8f5" stroke-width="1.25" stroke-linecap="round"/><path d="M8.5 13.3v7" stroke="#45b8f5" stroke-width="1.25" stroke-linecap="round"/><path d="M11.5 13.8v6" stroke="#45b8f5" stroke-width="1.25" stroke-linecap="round"/><path d="M14.5 10.1v13.4" stroke="#45b8f5" stroke-width="1.25" stroke-linecap="round"/><path d="M17.5 13.3v7" stroke="#45b8f5" stroke-width="1.25" stroke-linecap="round"/><path d="M20.5 10.1v13.4" stroke="#45b8f5" stroke-width="1.25" stroke-linecap="round"/><path d="M23.5 5.8v22" stroke="#45b8f5" stroke-width="1.25" stroke-linecap="round"/><path d="M26.5 10.1v13.4" stroke="#45b8f5" stroke-width="1.25" stroke-linecap="round"/><path d="M29.5 13.3v7" stroke="#45b8f5" stroke-width="1.25" stroke-linecap="round"/><path d="M32.5 11.0v11.7" stroke="#45b8f5" stroke-width="1.25" stroke-linecap="round"/><path d="M35.5 13.3v7" stroke="#45b8f5" stroke-width="1.25" stroke-linecap="round"/><path d="M38.5 15.7v2.3" stroke="#45b8f5" stroke-width="1.25" stroke-linecap="round"/></svg><div class="t" style="left:321px;top:139px;font-size:13px;color:#f0f0f0;">GR VS 2</div><div style="position:absolute;left:321px;top:156px;width:21px;height:18px;border-radius:4px;background:#2f65a8;border:1px solid #24518a"></div><svg style="left:325px;top:159px" width="13" height="12" viewBox="0 0 13 12"><path d="M3.6 3.3a4.6 4.6 0 1 0 5.8 0" fill="none" stroke="#e6eef8" stroke-width="1.2"/><path d="M6.5 .8v5" stroke="#e6eef8" stroke-width="1.2"/></svg><div style="position:absolute;left:348px;top:156px;width:41px;height:18px;border-radius:4px;background:#484848;border:1px solid #333"></div><div style="position:absolute;left:368px;top:157px;width:1px;height:16px;background:#333"></div><div class="t" style="left:352px;top:159px;font-size:12px;color:#f0f0f0;">M</div><div class="t" style="left:374px;top:159px;font-size:12px;color:#f0f0f0;">S</div><div style="position:absolute;left:395px;top:156px;width:41px;height:18px;border-radius:4px;background:#484848;border:1px solid #333"></div><div style="position:absolute;left:415px;top:157px;width:1px;height:16px;background:#333"></div><div class="t" style="left:401px;top:159px;font-size:12px;color:#f0f0f0;">R</div><div class="t" style="left:423px;top:159px;font-size:12px;color:#f0f0f0;">I</div><div style="position:absolute;left:498px;top:159px;width:120px;height:12px;border-radius:6px;background:#363636"></div><div style="position:absolute;left:504px;top:155px;width:20px;height:20px;border-radius:50%;background:radial-gradient(circle at 50% 40%,#a8a8a8,#8a8a8a);border:1px solid #d0d0d0;box-shadow:0 0 0 1px rgba(0,0,0,.25)"></div><svg style="left:628px;top:141px" width="29" height="31" viewBox="0 0 29 31"><path d="M5.5 22.5A12.5 12.5 0 1 1 23.5 22.5" fill="none" stroke="#363636" stroke-width="3"/><circle cx="14.5" cy="13.7" r="10.5" fill="#8e8e8e"/><circle cx="14.5" cy="13.7" r="10.5" fill="url(#kg)"/><path d="M14.5 1.5v8" stroke="#3fd060" stroke-width="1"/><path d="M14.5 1.5v9" stroke="#2a2a2a" stroke-width="0" /><text x="5" y="30.5" font-size="6" fill="#aaa" font-family="Liberation Sans">L</text><text x="20.5" y="30.5" font-size="6" fill="#aaa" font-family="Liberation Sans">R</text></svg><div class="t" style="left:226px;width:20px;text-align:center;top:208px;font-size:13px;color:#fff">42</div><div style="position:absolute;left:262px;top:196px;width:44px;height:33px;border-radius:4px;background:linear-gradient(#353d48,#29303a);border:1px solid #262b32"></div><svg style="left:262px;top:196px" width="44" height="33" viewBox="0 0 44 33"><path d="M5.5 15.7v2.3" stroke="#45b8f5" stroke-width="1.25" stroke-linecap="round"/><path d="M8.5 13.3v7" stroke="#45b8f5" stroke-width="1.25" stroke-linecap="round"/><path d="M11.5 13.8v6" stroke="#45b8f5" stroke-width="1.25" stroke-linecap="round"/><path d="M14.5 10.1v13.4" stroke="#45b8f5" stroke-width="1.25" stroke-linecap="round"/><path d="M17.5 13.3v7" stroke="#45b8f5" stroke-width="1.25" stroke-linecap="round"/><path d="M20.5 10.1v13.4" stroke="#45b8f5" stroke-width="1.25" stroke-linecap="round"/><path d="M23.5 5.8v22" stroke="#45b8f5" stroke-width="1.25" stroke-linecap="round"/><path d="M26.5 10.1v13.4" stroke="#45b8f5" stroke-width="1.25" stroke-linecap="round"/><path d="M29.5 13.3v7" stroke="#45b8f5" stroke-width="1.25" stroke-linecap="round"/><path d="M32.5 11.0v11.7" stroke="#45b8f5" stroke-width="1.25" stroke-linecap="round"/><path d="M35.5 13.3v7" stroke="#45b8f5" stroke-width="1.25" stroke-linecap="round"/><path d="M38.5 15.7v2.3" stroke="#45b8f5" stroke-width="1.25" stroke-linecap="round"/></svg><div class="t" style="left:321px;top:197px;font-size:13px;color:#f0f0f0;">GR VS 2</div><div style="position:absolute;left:321px;top:214px;width:21px;height:18px;border-radius:4px;background:#2f65a8;border:1px solid #24518a"></div><svg style="left:325px;top:217px" width="13" height="12" viewBox="0 0 13 12"><path d="M3.6 3.3a4.6 4.6 0 1 0 5.8 0" fill="none" stroke="#e6eef8" stroke-width="1.2"/><path d="M6.5 .8v5" stroke="#e6eef8" stroke-width="1.2"/></svg><div style="position:absolute;left:348px;top:214px;width:41px;height:18px;border-radius:4px;background:#484848;border:1px solid #333"></div><div style="position:absolute;left:368px;top:215px;width:1px;height:16px;background:#333"></div><div class="t" style="left:352px;top:217px;font-size:12px;color:#f0f0f0;">M</div><div class="t" style="left:374px;top:217px;font-size:12px;color:#f0f0f0;">S</div><div style="position:absolute;left:395px;top:214px;width:41px;height:18px;border-radius:4px;background:#484848;border:1px solid #333"></div><div style="position:absolute;left:415px;top:215px;width:1px;height:16px;background:#333"></div><div class="t" style="left:401px;top:217px;font-size:12px;color:#f0f0f0;">R</div><div class="t" style="left:423px;top:217px;font-size:12px;color:#f0f0f0;">I</div><div style="position:absolute;left:498px;top:217px;width:120px;height:12px;border-radius:6px;background:#363636"></div><div style="position:absolute;left:504px;top:213px;width:20px;height:20px;border-radius:50%;background:radial-gradient(circle at 50% 40%,#a8a8a8,#8a8a8a);border:1px solid #d0d0d0;box-shadow:0 0 0 1px rgba(0,0,0,.25)"></div><svg style="left:628px;top:199px" width="29" height="31" viewBox="0 0 29 31"><path d="M5.5 22.5A12.5 12.5 0 1 1 23.5 22.5" fill="none" stroke="#363636" stroke-width="3"/><circle cx="14.5" cy="13.7" r="10.5" fill="#8e8e8e"/><circle cx="14.5" cy="13.7" r="10.5" fill="url(#kg)"/><path d="M14.5 1.5v8" stroke="#3fd060" stroke-width="1"/><path d="M14.5 1.5v9" stroke="#2a2a2a" stroke-width="0" /><text x="5" y="30.5" font-size="6" fill="#aaa" font-family="Liberation Sans">L</text><text x="20.5" y="30.5" font-size="6" fill="#aaa" font-family="Liberation Sans">R</text></svg><div style="position:absolute;left:702px;top:126px;width:1px;height:117px;background:#3a3a3a"></div><div style="position:absolute;left:763px;top:126px;width:1px;height:117px;background:#3a3a3a"></div><div style="position:absolute;left:823px;top:126px;width:1px;height:117px;background:#3a3a3a"></div><div style="position:absolute;left:884px;top:126px;width:1px;height:117px;background:#3a3a3a"></div><div style="position:absolute;left:944px;top:126px;width:1px;height:117px;background:#3a3a3a"></div><div style="position:absolute;left:1005px;top:126px;width:1px;height:117px;background:#3a3a3a"></div><div style="position:absolute;left:1065px;top:126px;width:1px;height:117px;background:#3a3a3a"></div><div style="position:absolute;left:1126px;top:126px;width:1px;height:117px;background:#3a3a3a"></div><div style="position:absolute;left:1186px;top:126px;width:1px;height:117px;background:#3a3a3a"></div><div style="position:absolute;left:1247px;top:126px;width:1px;height:117px;background:#3a3a3a"></div><div style="position:absolute;left:1307px;top:126px;width:1px;height:117px;background:#3a3a3a"></div><div style="position:absolute;left:1368px;top:126px;width:1px;height:117px;background:#3a3a3a"></div><div style="position:absolute;left:1428px;top:126px;width:1px;height:117px;background:#3a3a3a"></div><div style="position:absolute;left:1489px;top:126px;width:1px;height:117px;background:#3a3a3a"></div><div style="position:absolute;left:1549px;top:126px;width:1px;height:117px;background:#3a3a3a"></div><div style="position:absolute;left:1610px;top:126px;width:1px;height:117px;background:#3a3a3a"></div><div style="position:absolute;left:1670px;top:126px;width:1px;height:117px;background:#3a3a3a"></div><div style="position:absolute;left:1731px;top:126px;width:1px;height:117px;background:#3a3a3a"></div><div style="position:absolute;left:1791px;top:126px;width:1px;height:117px;background:#3a3a3a"></div><div style="position:absolute;left:1852px;top:126px;width:1px;height:117px;background:#3a3a3a"></div><div style="position:absolute;left:818px;top:127px;width:139px;height:56px;border-radius:4px;background:#335a86;border:1px solid #1f3550"></div><svg style="left:0;top:0" width="1915" height="807"><clipPath id="c3.01"><rect x="819" y="127" width="137" height="56"/></clipPath><path clip-path="url(#c3.01)" d="M818 162.1h1V163.0h-1zM819 161.4h1V165.1h-1zM820 157.3h1V167.0h-1zM821 156.5h1V167.2h-1zM822 157.3h1V165.7h-1zM823 157.1h1V168.4h-1zM824 155.7h1V171.9h-1zM825 155.2h1V170.7h-1zM826 153.1h1V174.5h-1zM827 154.0h1V174.5h-1zM828 153.1h1V174.1h-1zM829 149.7h1V174.1h-1zM830 151.1h1V174.5h-1zM831 152.3h1V173.6h-1zM832 152.2h1V175.9h-1zM833 151.0h1V174.6h-1zM834 149.3h1V174.6h-1zM835 150.4h1V173.9h-1zM836 148.5h1V174.8h-1zM837 148.2h1V176.1h-1zM838 147.7h1V174.6h-1zM839 145.5h1V176.1h-1zM840 148.3h1V174.4h-1zM841 147.7h1V176.6h-1zM842 148.1h1V177.1h-1zM843 147.6h1V176.0h-1zM844 146.6h1V174.5h-1zM845 144.9h1V176.3h-1zM846 146.4h1V174.9h-1zM847 146.3h1V173.4h-1zM848 150.7h1V173.6h-1zM849 153.9h1V171.2h-1zM850 155.3h1V168.8h-1zM851 157.0h1V166.7h-1zM852 158.7h1V166.4h-1zM853 156.9h1V167.4h-1zM854 153.7h1V169.5h-1zM855 151.1h1V172.1h-1zM856 148.7h1V173.9h-1zM857 148.7h1V173.0h-1zM858 149.4h1V172.5h-1zM859 150.1h1V172.5h-1zM860 154.2h1V171.6h-1zM861 158.9h1V171.0h-1zM862 155.6h1V167.7h-1zM863 152.8h1V170.3h-1zM864 152.8h1V173.4h-1zM865 154.1h1V173.7h-1zM866 152.8h1V171.0h-1zM867 153.7h1V172.0h-1zM868 150.5h1V173.1h-1zM869 151.5h1V172.9h-1zM870 151.5h1V173.6h-1zM871 150.8h1V174.2h-1zM872 150.2h1V177.0h-1zM873 147.7h1V177.0h-1zM874 149.6h1V175.2h-1zM875 147.5h1V174.7h-1zM876 149.1h1V175.3h-1zM877 149.0h1V177.3h-1zM878 149.0h1V175.3h-1zM879 148.1h1V175.7h-1zM880 147.7h1V177.8h-1zM881 146.6h1V178.5h-1zM882 145.8h1V174.0h-1zM883 149.8h1V172.8h-1zM884 149.5h1V175.5h-1zM885 146.9h1V174.4h-1zM886 150.5h1V175.5h-1zM887 151.0h1V177.8h-1zM888 149.8h1V178.2h-1zM889 151.2h1V177.9h-1zM890 151.4h1V177.8h-1zM891 151.1h1V174.1h-1zM892 151.1h1V171.7h-1zM893 152.6h1V170.8h-1zM894 156.4h1V169.7h-1zM895 159.6h1V168.3h-1zM896 155.2h1V168.0h-1zM897 155.8h1V170.6h-1zM898 155.3h1V169.9h-1zM899 152.9h1V169.7h-1zM900 152.1h1V172.3h-1zM901 149.3h1V172.0h-1zM902 148.4h1V172.6h-1zM903 147.0h1V172.7h-1zM904 146.2h1V172.9h-1zM905 145.2h1V174.0h-1zM906 144.2h1V173.7h-1zM907 149.0h1V171.2h-1zM908 148.0h1V169.8h-1zM909 152.5h1V170.0h-1zM910 153.1h1V170.6h-1zM911 154.0h1V171.2h-1zM912 153.9h1V169.1h-1zM913 157.6h1V168.2h-1zM914 155.0h1V169.2h-1zM915 155.0h1V170.5h-1zM916 151.9h1V171.8h-1zM917 153.0h1V171.4h-1zM918 152.1h1V172.4h-1zM919 150.9h1V171.9h-1zM920 147.5h1V172.4h-1zM921 148.7h1V170.0h-1zM922 149.5h1V174.9h-1zM923 149.1h1V173.5h-1zM924 149.7h1V173.6h-1zM925 150.6h1V173.6h-1zM926 151.8h1V173.4h-1zM927 151.9h1V174.8h-1zM928 151.3h1V175.0h-1zM929 151.1h1V173.0h-1zM930 151.8h1V173.4h-1zM931 148.5h1V174.8h-1zM932 148.9h1V173.4h-1zM933 151.7h1V173.0h-1zM934 151.8h1V170.5h-1zM935 153.2h1V172.7h-1zM936 153.8h1V173.0h-1zM937 153.9h1V172.1h-1zM938 154.1h1V170.3h-1zM939 155.3h1V170.0h-1zM940 153.7h1V172.5h-1zM941 154.0h1V171.6h-1zM942 155.4h1V168.4h-1zM943 154.1h1V167.7h-1zM944 157.7h1V168.7h-1zM945 159.0h1V165.9h-1zM946 159.2h1V165.3h-1zM947 159.6h1V165.5h-1zM948 159.5h1V164.8h-1zM949 160.5h1V164.5h-1zM950 161.3h1V164.2h-1zM951 160.9h1V163.4h-1zM952 160.8h1V162.8h-1zM953 161.6h1V163.4h-1zM954 161.0h1V163.3h-1zM955 161.6h1V163.3h-1zM956 161.6h1V163.2h-1zM957 161.7h1V163.1h-1z" fill="#a9bdd5"/></svg><div class="t" style="left:823px;top:131px;font-size:11px;color:#f0f4f8;letter-spacing:.08px">GR VS_bip merged_3.01</div><div style="position:absolute;left:1059px;top:127px;width:140px;height:56px;border-radius:4px;background:#335a86;border:1px solid #1f3550"></div><svg style="left:0;top:0" width="1915" height="807"><clipPath id="c3.02"><rect x="1060" y="127" width="138" height="56"/></clipPath><path clip-path="url(#c3.02)" d="M1059 162.3h1V162.9h-1zM1060 161.6h1V163.1h-1zM1061 161.1h1V166.7h-1zM1062 159.7h1V166.7h-1zM1063 158.6h1V167.3h-1zM1064 160.4h1V166.7h-1zM1065 154.6h1V168.6h-1zM1066 155.4h1V169.2h-1zM1067 156.3h1V170.4h-1zM1068 154.6h1V173.5h-1zM1069 152.4h1V172.0h-1zM1070 148.9h1V175.5h-1zM1071 148.4h1V174.0h-1zM1072 149.1h1V174.3h-1zM1073 148.7h1V175.7h-1zM1074 145.7h1V177.4h-1zM1075 149.4h1V175.4h-1zM1076 149.6h1V174.7h-1zM1077 149.5h1V174.6h-1zM1078 148.1h1V174.9h-1zM1079 148.6h1V176.2h-1zM1080 149.4h1V174.6h-1zM1081 149.9h1V174.5h-1zM1082 150.2h1V174.2h-1zM1083 150.2h1V175.9h-1zM1084 149.6h1V173.9h-1zM1085 150.0h1V173.5h-1zM1086 149.6h1V175.9h-1zM1087 151.3h1V172.4h-1zM1088 153.4h1V169.7h-1zM1089 155.7h1V167.7h-1zM1090 158.3h1V166.9h-1zM1091 158.3h1V166.9h-1zM1092 159.0h1V166.8h-1zM1093 156.0h1V167.8h-1zM1094 156.4h1V168.6h-1zM1095 154.5h1V170.4h-1zM1096 150.5h1V175.1h-1zM1097 146.2h1V175.1h-1zM1098 148.7h1V175.7h-1zM1099 148.5h1V178.6h-1zM1100 148.0h1V178.2h-1zM1101 147.9h1V176.4h-1zM1102 148.2h1V177.3h-1zM1103 148.7h1V176.7h-1zM1104 148.6h1V173.8h-1zM1105 149.6h1V174.3h-1zM1106 148.3h1V175.0h-1zM1107 151.0h1V174.0h-1zM1108 150.5h1V172.9h-1zM1109 152.7h1V171.2h-1zM1110 153.3h1V172.1h-1zM1111 153.3h1V171.3h-1zM1112 153.2h1V173.6h-1zM1113 153.1h1V172.1h-1zM1114 155.0h1V172.2h-1zM1115 156.1h1V168.5h-1zM1116 156.7h1V168.2h-1zM1117 156.8h1V166.7h-1zM1118 152.0h1V169.6h-1zM1119 148.9h1V171.4h-1zM1120 150.5h1V171.6h-1zM1121 149.7h1V173.2h-1zM1122 149.3h1V176.1h-1zM1123 146.6h1V177.1h-1zM1124 145.8h1V175.2h-1zM1125 144.1h1V178.4h-1zM1126 146.4h1V178.2h-1zM1127 146.0h1V176.5h-1zM1128 146.9h1V175.8h-1zM1129 147.0h1V177.4h-1zM1130 147.4h1V174.9h-1zM1131 148.1h1V173.7h-1zM1132 149.6h1V172.0h-1zM1133 150.8h1V172.9h-1zM1134 150.8h1V173.8h-1zM1135 153.7h1V170.6h-1zM1136 153.9h1V170.1h-1zM1137 154.1h1V170.3h-1zM1138 155.9h1V170.2h-1zM1139 158.2h1V167.8h-1zM1140 155.7h1V167.9h-1zM1141 158.2h1V166.6h-1zM1142 153.8h1V169.8h-1zM1143 150.9h1V171.3h-1zM1144 147.0h1V171.8h-1zM1145 148.5h1V171.8h-1zM1146 145.7h1V172.9h-1zM1147 146.0h1V172.7h-1zM1148 148.5h1V172.8h-1zM1149 148.6h1V173.1h-1zM1150 153.5h1V171.8h-1zM1151 155.6h1V172.0h-1zM1152 150.7h1V170.3h-1zM1153 152.4h1V172.2h-1zM1154 152.2h1V170.2h-1zM1155 150.4h1V173.6h-1zM1156 150.9h1V173.2h-1zM1157 152.3h1V174.2h-1zM1158 152.7h1V174.3h-1zM1159 150.2h1V175.9h-1zM1160 153.3h1V175.2h-1zM1161 150.7h1V176.6h-1zM1162 152.3h1V175.5h-1zM1163 149.7h1V174.5h-1zM1164 151.7h1V172.9h-1zM1165 150.4h1V174.9h-1zM1166 151.1h1V173.4h-1zM1167 152.9h1V173.0h-1zM1168 151.8h1V173.4h-1zM1169 151.8h1V173.4h-1zM1170 151.8h1V173.7h-1zM1171 150.6h1V173.3h-1zM1172 153.3h1V173.1h-1zM1173 156.0h1V172.6h-1zM1174 155.4h1V174.5h-1zM1175 153.7h1V174.2h-1zM1176 155.4h1V170.1h-1zM1177 155.2h1V170.4h-1zM1178 152.4h1V170.8h-1zM1179 156.1h1V171.4h-1zM1180 156.9h1V173.3h-1zM1181 156.4h1V170.0h-1zM1182 155.8h1V167.5h-1zM1183 158.8h1V167.9h-1zM1184 155.4h1V166.1h-1zM1185 158.3h1V166.4h-1zM1186 160.1h1V165.9h-1zM1187 160.2h1V165.6h-1zM1188 159.3h1V165.1h-1zM1189 159.0h1V164.7h-1zM1190 158.2h1V165.0h-1zM1191 158.1h1V164.2h-1zM1192 160.2h1V166.2h-1zM1193 157.5h1V165.7h-1zM1194 159.5h1V164.9h-1zM1195 161.0h1V163.2h-1zM1196 160.5h1V163.5h-1zM1197 161.6h1V163.3h-1zM1198 161.7h1V164.7h-1zM1199 161.9h1V163.4h-1z" fill="#a9bdd5"/></svg><div class="t" style="left:1064px;top:131px;font-size:11px;color:#f0f4f8;letter-spacing:.08px">GR VS_bip merged_3.02</div><div style="position:absolute;left:1306px;top:127px;width:135px;height:56px;border-radius:4px;background:#335a86;border:1px solid #1f3550"></div><svg style="left:0;top:0" width="1915" height="807"><clipPath id="c3.03"><rect x="1307" y="127" width="133" height="56"/></clipPath><path clip-path="url(#c3.03)" d="M1305 162.1h1V163.1h-1zM1306 161.6h1V163.5h-1zM1307 159.4h1V165.7h-1zM1308 153.5h1V169.9h-1zM1309 154.1h1V172.0h-1zM1310 153.8h1V172.8h-1zM1311 152.7h1V175.7h-1zM1312 151.9h1V174.0h-1zM1313 151.4h1V174.2h-1zM1314 154.7h1V173.8h-1zM1315 152.5h1V173.4h-1zM1316 152.4h1V172.2h-1zM1317 153.2h1V174.1h-1zM1318 156.5h1V173.0h-1zM1319 153.7h1V169.9h-1zM1320 159.2h1V168.0h-1zM1321 157.8h1V166.0h-1zM1322 154.1h1V166.9h-1zM1323 150.5h1V174.0h-1zM1324 150.1h1V174.6h-1zM1325 149.5h1V174.6h-1zM1326 148.9h1V174.1h-1zM1327 148.9h1V174.3h-1zM1328 149.2h1V177.1h-1zM1329 149.5h1V177.4h-1zM1330 147.5h1V177.9h-1zM1331 150.5h1V174.6h-1zM1332 150.9h1V175.7h-1zM1333 151.3h1V173.5h-1zM1334 150.4h1V174.6h-1zM1335 152.0h1V172.7h-1zM1336 151.3h1V174.5h-1zM1337 148.0h1V175.0h-1zM1338 148.7h1V175.2h-1zM1339 148.4h1V176.1h-1zM1340 150.0h1V176.7h-1zM1341 150.2h1V177.6h-1zM1342 152.6h1V172.0h-1zM1343 157.3h1V168.7h-1zM1344 157.4h1V171.1h-1zM1345 157.4h1V167.7h-1zM1346 155.3h1V167.0h-1zM1347 155.9h1V168.8h-1zM1348 157.8h1V166.0h-1zM1349 158.8h1V168.4h-1zM1350 156.6h1V166.1h-1zM1351 154.3h1V171.9h-1zM1352 151.2h1V173.3h-1zM1353 149.9h1V174.1h-1zM1354 147.5h1V175.2h-1zM1355 148.9h1V176.2h-1zM1356 147.2h1V175.9h-1zM1357 146.4h1V178.9h-1zM1358 149.5h1V176.3h-1zM1359 150.1h1V176.2h-1zM1360 150.6h1V174.0h-1zM1361 151.6h1V172.3h-1zM1362 152.8h1V171.8h-1zM1363 152.3h1V172.5h-1zM1364 149.5h1V173.1h-1zM1365 149.7h1V173.1h-1zM1366 149.2h1V173.6h-1zM1367 148.5h1V173.9h-1zM1368 148.1h1V176.7h-1zM1369 148.4h1V173.9h-1zM1370 148.1h1V176.0h-1zM1371 148.4h1V174.0h-1zM1372 148.3h1V173.4h-1zM1373 148.5h1V173.2h-1zM1374 149.1h1V173.4h-1zM1375 150.8h1V173.3h-1zM1376 151.9h1V172.3h-1zM1377 154.4h1V169.7h-1zM1378 158.1h1V168.2h-1zM1379 158.1h1V165.8h-1zM1380 158.3h1V166.2h-1zM1381 159.6h1V165.8h-1zM1382 156.9h1V166.9h-1zM1383 152.5h1V168.3h-1zM1384 149.4h1V171.6h-1zM1385 152.8h1V172.4h-1zM1386 151.2h1V172.1h-1zM1387 153.8h1V170.2h-1zM1388 153.8h1V172.7h-1zM1389 153.4h1V172.2h-1zM1390 152.7h1V173.6h-1zM1391 153.9h1V172.4h-1zM1392 155.8h1V174.2h-1zM1393 156.6h1V171.7h-1zM1394 158.1h1V169.9h-1zM1395 154.9h1V168.2h-1zM1396 153.2h1V167.0h-1zM1397 154.0h1V169.0h-1zM1398 154.8h1V170.0h-1zM1399 151.8h1V172.2h-1zM1400 151.3h1V173.4h-1zM1401 147.6h1V176.7h-1zM1402 149.7h1V175.1h-1zM1403 148.7h1V175.9h-1zM1404 148.6h1V174.1h-1zM1405 149.1h1V174.3h-1zM1406 151.4h1V177.2h-1zM1407 151.6h1V174.9h-1zM1408 148.9h1V176.9h-1zM1409 149.6h1V172.7h-1zM1410 148.9h1V171.6h-1zM1411 146.4h1V171.2h-1zM1412 148.9h1V173.4h-1zM1413 152.3h1V174.3h-1zM1414 152.5h1V174.0h-1zM1415 152.6h1V172.5h-1zM1416 152.1h1V171.6h-1zM1417 154.3h1V172.0h-1zM1418 154.6h1V169.8h-1zM1419 155.8h1V171.4h-1zM1420 154.3h1V169.4h-1zM1421 154.8h1V169.2h-1zM1422 153.5h1V169.5h-1zM1423 155.0h1V170.9h-1zM1424 157.7h1V169.1h-1zM1425 157.6h1V169.1h-1zM1426 155.3h1V167.9h-1zM1427 158.0h1V167.9h-1zM1428 155.6h1V169.3h-1zM1429 158.3h1V168.3h-1zM1430 159.7h1V168.0h-1zM1431 159.7h1V164.9h-1zM1432 160.4h1V164.4h-1zM1433 160.3h1V163.7h-1zM1434 161.1h1V163.6h-1zM1435 159.7h1V162.9h-1zM1436 161.6h1V163.4h-1zM1437 158.7h1V163.3h-1zM1438 161.5h1V163.1h-1zM1439 162.2h1V163.1h-1zM1440 161.6h1V163.1h-1z" fill="#a9bdd5"/></svg><div class="t" style="left:1311px;top:131px;font-size:11px;color:#f0f4f8;letter-spacing:.08px">GR VS_bip merged_3.03</div><div style="position:absolute;left:1540px;top:127px;width:140px;height:56px;border-radius:4px;background:#335a86;border:1px solid #1f3550"></div><svg style="left:0;top:0" width="1915" height="807"><clipPath id="c3.04"><rect x="1541" y="127" width="138" height="56"/></clipPath><path clip-path="url(#c3.04)" d="M1538 162.3h1V162.9h-1zM1539 161.9h1V163.2h-1zM1540 160.5h1V163.9h-1zM1541 158.2h1V166.9h-1zM1542 158.9h1V164.5h-1zM1543 157.8h1V167.7h-1zM1544 157.3h1V165.4h-1zM1545 160.0h1V168.3h-1zM1546 160.0h1V167.7h-1zM1547 155.4h1V166.2h-1zM1548 156.0h1V169.1h-1zM1549 152.4h1V172.7h-1zM1550 150.5h1V176.0h-1zM1551 148.8h1V174.7h-1zM1552 149.8h1V176.7h-1zM1553 148.3h1V175.1h-1zM1554 150.5h1V175.8h-1zM1555 150.9h1V175.0h-1zM1556 150.5h1V178.4h-1zM1557 148.5h1V178.1h-1zM1558 149.6h1V177.2h-1zM1559 149.3h1V174.5h-1zM1560 149.3h1V176.7h-1zM1561 149.1h1V174.0h-1zM1562 148.7h1V174.6h-1zM1563 148.6h1V175.2h-1zM1564 149.4h1V175.4h-1zM1565 148.5h1V177.8h-1zM1566 148.9h1V176.2h-1zM1567 148.4h1V177.7h-1zM1568 148.9h1V174.3h-1zM1569 147.8h1V178.2h-1zM1570 147.3h1V175.5h-1zM1571 153.0h1V173.7h-1zM1572 154.9h1V171.2h-1zM1573 156.3h1V171.4h-1zM1574 154.3h1V168.0h-1zM1575 157.4h1V166.9h-1zM1576 157.2h1V169.4h-1zM1577 158.1h1V167.1h-1zM1578 156.1h1V168.7h-1zM1579 154.4h1V172.0h-1zM1580 151.5h1V173.9h-1zM1581 147.5h1V175.9h-1zM1582 148.7h1V176.6h-1zM1583 147.1h1V176.6h-1zM1584 145.1h1V176.3h-1zM1585 147.4h1V173.7h-1zM1586 147.5h1V176.1h-1zM1587 147.9h1V176.1h-1zM1588 149.0h1V176.0h-1zM1589 149.0h1V175.8h-1zM1590 146.7h1V176.1h-1zM1591 147.5h1V176.6h-1zM1592 148.9h1V178.8h-1zM1593 149.3h1V175.2h-1zM1594 149.9h1V174.0h-1zM1595 150.3h1V173.8h-1zM1596 147.6h1V174.8h-1zM1597 150.3h1V175.3h-1zM1598 152.7h1V171.6h-1zM1599 150.4h1V173.2h-1zM1600 149.4h1V174.3h-1zM1601 150.7h1V174.3h-1zM1602 149.6h1V174.4h-1zM1603 150.0h1V175.6h-1zM1604 149.9h1V176.5h-1zM1605 149.3h1V175.6h-1zM1606 149.0h1V176.0h-1zM1607 149.4h1V176.1h-1zM1608 147.1h1V178.0h-1zM1609 151.2h1V178.8h-1zM1610 147.5h1V179.4h-1zM1611 149.3h1V175.9h-1zM1612 146.7h1V175.7h-1zM1613 146.0h1V174.6h-1zM1614 150.3h1V174.1h-1zM1615 150.3h1V173.2h-1zM1616 152.2h1V170.9h-1zM1617 152.5h1V170.4h-1zM1618 154.5h1V168.3h-1zM1619 158.1h1V168.8h-1zM1620 157.9h1V168.3h-1zM1621 156.5h1V166.5h-1zM1622 159.2h1V166.1h-1zM1623 155.7h1V168.8h-1zM1624 155.1h1V170.0h-1zM1625 153.7h1V170.5h-1zM1626 152.2h1V170.5h-1zM1627 153.3h1V170.5h-1zM1628 154.0h1V171.7h-1zM1629 153.0h1V170.7h-1zM1630 152.9h1V172.3h-1zM1631 155.1h1V172.2h-1zM1632 154.8h1V170.9h-1zM1633 155.4h1V169.6h-1zM1634 153.2h1V169.6h-1zM1635 156.5h1V168.6h-1zM1636 156.0h1V168.7h-1zM1637 155.6h1V172.4h-1zM1638 154.3h1V173.1h-1zM1639 153.2h1V170.6h-1zM1640 152.3h1V170.8h-1zM1641 152.4h1V169.2h-1zM1642 154.6h1V172.8h-1zM1643 150.8h1V170.1h-1zM1644 152.6h1V171.1h-1zM1645 149.9h1V172.0h-1zM1646 153.3h1V171.7h-1zM1647 153.6h1V170.7h-1zM1648 155.0h1V169.9h-1zM1649 155.8h1V172.2h-1zM1650 155.7h1V170.3h-1zM1651 154.7h1V172.4h-1zM1652 153.2h1V170.5h-1zM1653 151.6h1V172.6h-1zM1654 150.9h1V169.9h-1zM1655 152.4h1V170.3h-1zM1656 153.9h1V171.5h-1zM1657 153.8h1V169.7h-1zM1658 154.2h1V168.8h-1zM1659 152.6h1V168.4h-1zM1660 153.6h1V167.4h-1zM1661 156.2h1V167.1h-1zM1662 156.9h1V167.6h-1zM1663 157.2h1V166.8h-1zM1664 158.0h1V166.7h-1zM1665 157.2h1V165.3h-1zM1666 159.9h1V166.3h-1zM1667 159.5h1V165.0h-1zM1668 159.7h1V165.2h-1zM1669 159.9h1V164.5h-1zM1670 158.3h1V164.7h-1zM1671 160.7h1V164.6h-1zM1672 161.5h1V163.7h-1zM1673 160.8h1V164.2h-1zM1674 161.2h1V163.8h-1zM1675 161.6h1V165.1h-1zM1676 161.3h1V163.4h-1zM1677 160.3h1V163.4h-1zM1678 160.2h1V162.8h-1zM1679 162.1h1V163.4h-1z" fill="#a9bdd5"/></svg><div class="t" style="left:1545px;top:131px;font-size:11px;color:#f0f4f8;letter-spacing:.08px">GR VS_bip merged_3.04</div><div style="position:absolute;left:764px;top:185px;width:1033px;height:55px;border-radius:4px;background:#335a86;border:1px solid #a9cdf0"></div><div style="position:absolute;left:765px;top:186px;width:1031px;height:17px;border-radius:3px 3px 0 0;background:#cde4fb"></div><div style="position:absolute;left:765px;top:220px;width:1031px;height:1px;background:#cde4fb"></div><svg style="left:0;top:0" width="1915" height="807"><path d="M818 220.7h1V221.5h-1zM819 220.0h1V223.4h-1zM820 216.2h1V225.1h-1zM821 215.5h1V225.3h-1zM822 216.3h1V224.0h-1zM823 216.0h1V226.5h-1zM824 214.7h1V229.7h-1zM825 214.2h1V228.6h-1zM826 212.4h1V232.0h-1zM827 213.1h1V232.0h-1zM828 212.4h1V231.7h-1zM829 209.2h1V231.6h-1zM830 210.5h1V232.0h-1zM831 211.6h1V231.3h-1zM832 211.5h1V233.4h-1zM833 210.4h1V232.2h-1zM834 208.8h1V232.1h-1zM835 209.8h1V231.5h-1zM836 208.1h1V232.4h-1zM837 207.8h1V233.5h-1zM838 207.4h1V232.2h-1zM839 205.4h1V233.6h-1zM840 207.9h1V232.0h-1zM841 207.4h1V234.0h-1zM842 207.7h1V234.4h-1zM843 207.2h1V233.5h-1zM844 206.4h1V232.0h-1zM845 204.8h1V233.7h-1zM846 206.1h1V232.4h-1zM847 206.1h1V231.0h-1zM848 210.2h1V231.2h-1zM849 213.1h1V229.0h-1zM850 214.4h1V226.8h-1zM851 215.9h1V224.9h-1zM852 217.5h1V224.6h-1zM853 215.9h1V225.5h-1zM854 212.9h1V227.5h-1zM855 210.5h1V229.8h-1zM856 208.3h1V231.5h-1zM857 208.3h1V230.7h-1zM858 208.9h1V230.2h-1zM859 209.6h1V230.2h-1zM860 213.4h1V229.4h-1zM861 217.7h1V228.8h-1zM862 214.7h1V225.8h-1zM863 212.1h1V228.2h-1zM864 212.1h1V231.0h-1zM865 213.3h1V231.3h-1zM866 212.0h1V228.8h-1zM867 212.9h1V229.7h-1zM868 210.0h1V230.8h-1zM869 210.9h1V230.5h-1zM870 210.9h1V231.3h-1zM871 210.2h1V231.7h-1zM872 209.6h1V234.4h-1zM873 207.4h1V234.4h-1zM874 209.2h1V232.7h-1zM875 207.1h1V232.3h-1zM876 208.7h1V232.8h-1zM877 208.6h1V234.6h-1zM878 208.6h1V232.8h-1zM879 207.7h1V233.1h-1zM880 207.4h1V235.1h-1zM881 206.4h1V235.8h-1zM882 205.7h1V231.6h-1zM883 209.3h1V230.5h-1zM884 209.1h1V233.0h-1zM885 206.6h1V232.0h-1zM886 209.9h1V233.0h-1zM887 210.4h1V235.1h-1zM888 209.3h1V235.5h-1zM889 210.6h1V235.2h-1zM890 210.7h1V235.1h-1zM891 210.5h1V231.7h-1zM892 210.5h1V229.5h-1zM893 211.9h1V228.6h-1zM894 215.4h1V227.6h-1zM895 218.3h1V226.3h-1zM896 214.3h1V226.1h-1zM897 214.9h1V228.5h-1zM898 214.3h1V227.8h-1zM899 212.1h1V227.6h-1zM900 211.4h1V230.0h-1zM901 208.9h1V229.7h-1zM902 208.0h1V230.3h-1zM903 206.8h1V230.4h-1zM904 206.0h1V230.6h-1zM905 205.0h1V231.6h-1zM906 204.1h1V231.3h-1zM907 208.6h1V229.0h-1zM908 207.7h1V227.8h-1zM909 211.8h1V227.9h-1zM910 212.3h1V228.5h-1zM911 213.2h1V229.0h-1zM912 213.1h1V227.1h-1zM913 216.5h1V226.3h-1zM914 214.1h1V227.1h-1zM915 214.1h1V228.4h-1zM916 211.2h1V229.6h-1zM917 212.3h1V229.2h-1zM918 211.5h1V230.1h-1zM919 210.4h1V229.7h-1zM920 207.2h1V230.1h-1zM921 208.3h1V227.9h-1zM922 209.0h1V232.4h-1zM923 208.6h1V231.1h-1zM924 209.2h1V231.2h-1zM925 210.1h1V231.3h-1zM926 211.2h1V231.0h-1zM927 211.2h1V232.3h-1zM928 210.7h1V232.5h-1zM929 210.5h1V230.7h-1zM930 211.2h1V231.1h-1zM931 208.1h1V232.3h-1zM932 208.5h1V231.0h-1zM933 211.1h1V230.7h-1zM934 211.1h1V228.4h-1zM935 212.5h1V230.4h-1zM936 213.0h1V230.7h-1zM937 213.1h1V229.8h-1zM938 213.2h1V228.2h-1zM939 214.4h1V227.9h-1zM940 212.9h1V230.2h-1zM941 213.1h1V229.4h-1zM942 214.5h1V226.4h-1zM943 213.3h1V225.8h-1zM944 216.6h1V226.7h-1zM945 217.8h1V224.1h-1zM946 218.0h1V223.6h-1zM947 218.3h1V223.8h-1zM948 218.2h1V223.2h-1zM949 219.2h1V222.9h-1zM950 219.9h1V222.6h-1zM951 219.5h1V221.8h-1zM952 219.4h1V221.3h-1zM953 220.2h1V221.9h-1zM954 219.6h1V221.8h-1zM955 220.1h1V221.7h-1zM956 220.2h1V221.6h-1zM957 220.2h1V221.6h-1zM1059 220.8h1V221.3h-1zM1060 220.2h1V221.6h-1zM1061 219.7h1V224.8h-1zM1062 218.4h1V224.8h-1zM1063 217.5h1V225.4h-1zM1064 219.0h1V224.9h-1zM1065 213.8h1V226.6h-1zM1066 214.4h1V227.2h-1zM1067 215.3h1V228.3h-1zM1068 213.7h1V231.1h-1zM1069 211.7h1V229.8h-1zM1070 208.5h1V233.0h-1zM1071 208.0h1V231.6h-1zM1072 208.6h1V231.9h-1zM1073 208.3h1V233.2h-1zM1074 205.5h1V234.7h-1zM1075 208.9h1V232.8h-1zM1076 209.1h1V232.3h-1zM1077 209.0h1V232.1h-1zM1078 207.7h1V232.4h-1zM1079 208.2h1V233.6h-1zM1080 208.9h1V232.1h-1zM1081 209.4h1V232.1h-1zM1082 209.7h1V231.7h-1zM1083 209.6h1V233.3h-1zM1084 209.1h1V231.5h-1zM1085 209.5h1V231.1h-1zM1086 209.1h1V233.3h-1zM1087 210.7h1V230.2h-1zM1088 212.6h1V227.6h-1zM1089 214.8h1V225.8h-1zM1090 217.1h1V225.0h-1zM1091 217.2h1V225.0h-1zM1092 217.8h1V224.9h-1zM1093 215.0h1V225.9h-1zM1094 215.4h1V226.6h-1zM1095 213.7h1V228.3h-1zM1096 209.9h1V232.6h-1zM1097 206.0h1V232.6h-1zM1098 208.3h1V233.2h-1zM1099 208.1h1V235.9h-1zM1100 207.6h1V235.4h-1zM1101 207.5h1V233.8h-1zM1102 207.8h1V234.6h-1zM1103 208.3h1V234.0h-1zM1104 208.2h1V231.4h-1zM1105 209.1h1V231.8h-1zM1106 207.9h1V232.5h-1zM1107 210.4h1V231.6h-1zM1108 210.0h1V230.5h-1zM1109 212.0h1V229.0h-1zM1110 212.5h1V229.8h-1zM1111 212.5h1V229.2h-1zM1112 212.4h1V231.2h-1zM1113 212.4h1V229.9h-1zM1114 214.1h1V229.9h-1zM1115 215.1h1V226.5h-1zM1116 215.7h1V226.3h-1zM1117 215.7h1V224.8h-1zM1118 211.3h1V227.5h-1zM1119 208.5h1V229.2h-1zM1120 209.9h1V229.4h-1zM1121 209.2h1V230.9h-1zM1122 208.8h1V233.5h-1zM1123 206.4h1V234.4h-1zM1124 205.6h1V232.7h-1zM1125 204.1h1V235.7h-1zM1126 206.2h1V235.5h-1zM1127 205.8h1V233.9h-1zM1128 206.6h1V233.2h-1zM1129 206.7h1V234.7h-1zM1130 207.1h1V232.4h-1zM1131 207.8h1V231.4h-1zM1132 209.1h1V229.8h-1zM1133 210.3h1V230.6h-1zM1134 210.2h1V231.4h-1zM1135 212.9h1V228.5h-1zM1136 213.1h1V228.0h-1zM1137 213.2h1V228.2h-1zM1138 214.9h1V228.1h-1zM1139 217.1h1V225.9h-1zM1140 214.7h1V226.0h-1zM1141 217.1h1V224.7h-1zM1142 213.0h1V227.7h-1zM1143 210.3h1V229.1h-1zM1144 206.7h1V229.6h-1zM1145 208.1h1V229.5h-1zM1146 205.5h1V230.6h-1zM1147 205.8h1V230.4h-1zM1148 208.1h1V230.5h-1zM1149 208.2h1V230.8h-1zM1150 212.7h1V229.6h-1zM1151 214.6h1V229.7h-1zM1152 210.1h1V228.2h-1zM1153 211.7h1V229.9h-1zM1154 211.5h1V228.1h-1zM1155 209.8h1V231.2h-1zM1156 210.4h1V230.9h-1zM1157 211.6h1V231.8h-1zM1158 212.0h1V231.9h-1zM1159 209.7h1V233.4h-1zM1160 212.5h1V232.7h-1zM1161 210.1h1V234.0h-1zM1162 211.6h1V233.0h-1zM1163 209.2h1V232.1h-1zM1164 211.1h1V230.6h-1zM1165 209.8h1V232.4h-1zM1166 210.5h1V231.0h-1zM1167 212.2h1V230.7h-1zM1168 211.1h1V231.1h-1zM1169 211.1h1V231.1h-1zM1170 211.1h1V231.3h-1zM1171 210.0h1V231.0h-1zM1172 212.5h1V230.8h-1zM1173 215.0h1V230.3h-1zM1174 214.5h1V232.1h-1zM1175 212.9h1V231.8h-1zM1176 214.5h1V228.0h-1zM1177 214.2h1V228.3h-1zM1178 211.7h1V228.7h-1zM1179 215.1h1V229.2h-1zM1180 215.8h1V230.9h-1zM1181 215.4h1V227.9h-1zM1182 214.8h1V225.6h-1zM1183 217.6h1V226.0h-1zM1184 214.5h1V224.3h-1zM1185 217.1h1V224.6h-1zM1186 218.8h1V224.2h-1zM1187 218.8h1V223.8h-1zM1188 218.0h1V223.4h-1zM1189 217.8h1V223.1h-1zM1190 217.0h1V223.3h-1zM1191 217.0h1V222.5h-1zM1192 218.9h1V224.4h-1zM1193 216.4h1V223.9h-1zM1194 218.2h1V223.2h-1zM1195 219.6h1V221.6h-1zM1196 219.1h1V221.9h-1zM1197 220.2h1V221.8h-1zM1198 220.3h1V223.0h-1zM1199 220.5h1V221.9h-1zM1305 220.7h1V221.5h-1zM1306 220.1h1V221.9h-1zM1307 218.2h1V223.9h-1zM1308 212.7h1V227.8h-1zM1309 213.3h1V229.8h-1zM1310 213.0h1V230.5h-1zM1311 212.0h1V233.2h-1zM1312 211.2h1V231.6h-1zM1313 210.7h1V231.8h-1zM1314 213.8h1V231.4h-1zM1315 211.8h1V231.0h-1zM1316 211.7h1V229.9h-1zM1317 212.4h1V231.7h-1zM1318 215.5h1V230.7h-1zM1319 212.9h1V227.8h-1zM1320 218.0h1V226.1h-1zM1321 216.7h1V224.2h-1zM1322 213.3h1V225.1h-1zM1323 210.0h1V231.6h-1zM1324 209.6h1V232.1h-1zM1325 209.0h1V232.1h-1zM1326 208.5h1V231.7h-1zM1327 208.4h1V231.9h-1zM1328 208.7h1V234.4h-1zM1329 209.0h1V234.8h-1zM1330 207.2h1V235.2h-1zM1331 209.9h1V232.1h-1zM1332 210.3h1V233.2h-1zM1333 210.7h1V231.1h-1zM1334 209.9h1V232.2h-1zM1335 211.3h1V230.4h-1zM1336 210.7h1V232.0h-1zM1337 207.7h1V232.5h-1zM1338 208.3h1V232.7h-1zM1339 208.0h1V233.5h-1zM1340 209.5h1V234.1h-1zM1341 209.7h1V234.9h-1zM1342 211.9h1V229.8h-1zM1343 216.2h1V226.7h-1zM1344 216.3h1V228.9h-1zM1345 216.3h1V225.8h-1zM1346 214.4h1V225.1h-1zM1347 214.9h1V226.8h-1zM1348 216.7h1V224.2h-1zM1349 217.6h1V226.4h-1zM1350 215.5h1V224.3h-1zM1351 213.5h1V229.7h-1zM1352 210.6h1V231.0h-1zM1353 209.4h1V231.7h-1zM1354 207.2h1V232.7h-1zM1355 208.5h1V233.6h-1zM1356 206.9h1V233.4h-1zM1357 206.2h1V236.1h-1zM1358 209.0h1V233.7h-1zM1359 209.6h1V233.6h-1zM1360 210.0h1V231.6h-1zM1361 210.9h1V230.1h-1zM1362 212.0h1V229.6h-1zM1363 211.6h1V230.2h-1zM1364 209.0h1V230.8h-1zM1365 209.2h1V230.7h-1zM1366 208.8h1V231.2h-1zM1367 208.1h1V231.5h-1zM1368 207.8h1V234.1h-1zM1369 208.1h1V231.5h-1zM1370 207.8h1V233.4h-1zM1371 208.0h1V231.6h-1zM1372 207.9h1V231.0h-1zM1373 208.1h1V230.9h-1zM1374 208.7h1V231.1h-1zM1375 210.2h1V230.9h-1zM1376 211.3h1V230.0h-1zM1377 213.5h1V227.6h-1zM1378 216.9h1V226.2h-1zM1379 216.9h1V224.1h-1zM1380 217.1h1V224.4h-1zM1381 218.3h1V224.1h-1zM1382 215.9h1V225.0h-1zM1383 211.8h1V226.4h-1zM1384 209.0h1V229.4h-1zM1385 212.1h1V230.1h-1zM1386 210.6h1V229.9h-1zM1387 213.0h1V228.1h-1zM1388 213.0h1V230.4h-1zM1389 212.6h1V229.9h-1zM1390 211.9h1V231.2h-1zM1391 213.1h1V230.1h-1zM1392 214.9h1V231.8h-1zM1393 215.6h1V229.5h-1zM1394 217.0h1V227.8h-1zM1395 214.0h1V226.3h-1zM1396 212.4h1V225.2h-1zM1397 213.2h1V227.0h-1zM1398 213.9h1V227.9h-1zM1399 211.1h1V229.9h-1zM1400 210.7h1V231.0h-1zM1401 207.3h1V234.1h-1zM1402 209.2h1V232.6h-1zM1403 208.3h1V233.4h-1zM1404 208.2h1V231.7h-1zM1405 208.7h1V231.9h-1zM1406 210.8h1V234.5h-1zM1407 211.0h1V232.4h-1zM1408 208.5h1V234.3h-1zM1409 209.1h1V230.4h-1zM1410 208.5h1V229.4h-1zM1411 206.2h1V229.0h-1zM1412 208.5h1V231.0h-1zM1413 211.6h1V231.9h-1zM1414 211.8h1V231.6h-1zM1415 211.8h1V230.2h-1zM1416 211.5h1V229.4h-1zM1417 213.5h1V229.8h-1zM1418 213.8h1V227.7h-1zM1419 214.9h1V229.2h-1zM1420 213.4h1V227.4h-1zM1421 213.9h1V227.2h-1zM1422 212.7h1V227.4h-1zM1423 214.1h1V228.7h-1zM1424 216.6h1V227.0h-1zM1425 216.5h1V227.1h-1zM1426 214.4h1V225.9h-1zM1427 216.9h1V225.9h-1zM1428 214.6h1V227.3h-1zM1429 217.1h1V226.3h-1zM1430 218.4h1V226.0h-1zM1431 218.4h1V223.2h-1zM1432 219.1h1V222.8h-1zM1433 218.9h1V222.1h-1zM1434 219.7h1V222.0h-1zM1435 218.4h1V221.3h-1zM1436 220.2h1V221.8h-1zM1437 217.5h1V221.7h-1zM1438 220.0h1V221.6h-1zM1439 220.7h1V221.5h-1zM1440 220.2h1V221.5h-1zM1538 220.8h1V221.3h-1zM1539 220.4h1V221.6h-1zM1540 219.2h1V222.3h-1zM1541 217.1h1V225.0h-1zM1542 217.6h1V222.8h-1zM1543 216.6h1V225.8h-1zM1544 216.2h1V223.6h-1zM1545 218.7h1V226.4h-1zM1546 218.7h1V225.8h-1zM1547 214.5h1V224.4h-1zM1548 215.0h1V227.1h-1zM1549 211.7h1V230.4h-1zM1550 210.0h1V233.5h-1zM1551 208.4h1V232.3h-1zM1552 209.3h1V234.1h-1zM1553 207.9h1V232.6h-1zM1554 209.9h1V233.2h-1zM1555 210.3h1V232.6h-1zM1556 209.9h1V235.6h-1zM1557 208.1h1V235.3h-1zM1558 209.1h1V234.6h-1zM1559 208.8h1V232.0h-1zM1560 208.8h1V234.0h-1zM1561 208.6h1V231.5h-1zM1562 208.3h1V232.2h-1zM1563 208.2h1V232.7h-1zM1564 208.9h1V232.9h-1zM1565 208.1h1V235.1h-1zM1566 208.5h1V233.6h-1zM1567 208.0h1V235.0h-1zM1568 208.5h1V231.9h-1zM1569 207.5h1V235.5h-1zM1570 207.0h1V233.0h-1zM1571 212.3h1V231.3h-1zM1572 214.0h1V229.0h-1zM1573 215.3h1V229.2h-1zM1574 213.4h1V226.1h-1zM1575 216.3h1V225.0h-1zM1576 216.1h1V227.3h-1zM1577 216.9h1V225.2h-1zM1578 215.1h1V226.7h-1zM1579 213.5h1V229.8h-1zM1580 210.9h1V231.5h-1zM1581 207.1h1V233.4h-1zM1582 208.3h1V234.0h-1zM1583 206.8h1V234.0h-1zM1584 204.9h1V233.7h-1zM1585 207.1h1V231.3h-1zM1586 207.2h1V233.6h-1zM1587 207.6h1V233.5h-1zM1588 208.6h1V233.4h-1zM1589 208.5h1V233.3h-1zM1590 206.5h1V233.5h-1zM1591 207.1h1V234.0h-1zM1592 208.5h1V236.0h-1zM1593 208.8h1V232.7h-1zM1594 209.4h1V231.6h-1zM1595 209.8h1V231.4h-1zM1596 207.3h1V232.3h-1zM1597 209.7h1V232.8h-1zM1598 212.0h1V229.4h-1zM1599 209.8h1V230.9h-1zM1600 208.9h1V231.9h-1zM1601 210.1h1V231.9h-1zM1602 209.1h1V232.0h-1zM1603 209.5h1V233.1h-1zM1604 209.4h1V233.9h-1zM1605 208.8h1V233.1h-1zM1606 208.5h1V233.5h-1zM1607 208.9h1V233.5h-1zM1608 206.8h1V235.3h-1zM1609 210.6h1V236.0h-1zM1610 207.2h1V236.6h-1zM1611 208.8h1V233.3h-1zM1612 206.5h1V233.2h-1zM1613 205.8h1V232.2h-1zM1614 209.7h1V231.7h-1zM1615 209.8h1V230.9h-1zM1616 211.5h1V228.7h-1zM1617 211.8h1V228.3h-1zM1618 213.6h1V226.3h-1zM1619 217.0h1V226.8h-1zM1620 216.8h1V226.3h-1zM1621 215.5h1V224.7h-1zM1622 218.0h1V224.3h-1zM1623 214.7h1V226.8h-1zM1624 214.2h1V227.9h-1zM1625 212.9h1V228.3h-1zM1626 211.5h1V228.4h-1zM1627 212.5h1V228.4h-1zM1628 213.1h1V229.5h-1zM1629 212.3h1V228.5h-1zM1630 212.1h1V230.0h-1zM1631 214.1h1V229.9h-1zM1632 213.9h1V228.7h-1zM1633 214.5h1V227.6h-1zM1634 212.4h1V227.5h-1zM1635 215.4h1V226.6h-1zM1636 215.0h1V226.7h-1zM1637 214.6h1V230.1h-1zM1638 213.5h1V230.8h-1zM1639 212.4h1V228.5h-1zM1640 211.6h1V228.7h-1zM1641 211.7h1V227.1h-1zM1642 213.7h1V230.5h-1zM1643 210.3h1V228.0h-1zM1644 211.9h1V228.9h-1zM1645 209.4h1V229.8h-1zM1646 212.5h1V229.5h-1zM1647 212.8h1V228.5h-1zM1648 214.1h1V227.8h-1zM1649 214.8h1V230.0h-1zM1650 214.8h1V228.2h-1zM1651 213.8h1V230.1h-1zM1652 212.4h1V228.4h-1zM1653 210.9h1V230.3h-1zM1654 210.3h1V227.8h-1zM1655 211.7h1V228.2h-1zM1656 213.1h1V229.3h-1zM1657 213.0h1V227.6h-1zM1658 213.4h1V226.8h-1zM1659 211.9h1V226.5h-1zM1660 212.8h1V225.6h-1zM1661 215.2h1V225.2h-1zM1662 215.8h1V225.7h-1zM1663 216.1h1V224.9h-1zM1664 216.8h1V224.9h-1zM1665 216.1h1V223.6h-1zM1666 218.6h1V224.5h-1zM1667 218.2h1V223.3h-1zM1668 218.4h1V223.5h-1zM1669 218.6h1V222.9h-1zM1670 217.1h1V223.0h-1zM1671 219.3h1V223.0h-1zM1672 220.1h1V222.1h-1zM1673 219.4h1V222.6h-1zM1674 219.8h1V222.2h-1zM1675 220.2h1V223.4h-1zM1676 219.9h1V221.9h-1zM1677 218.9h1V221.8h-1zM1678 218.9h1V221.3h-1zM1679 220.6h1V221.9h-1z" fill="#cde4fb"/></svg><div class="t" style="left:769px;top:189px;font-size:11px;color:#1a2a3a;">GR VS_bip merged_3.5</div><svg style="left:894px;top:189px" width="15" height="11" viewBox="0 0 15 11"><circle cx="5" cy="5.5" r="4.3" fill="none" stroke="#2a3a4a" stroke-width="1"/><circle cx="9.5" cy="5.5" r="4.3" fill="none" stroke="#2a3a4a" stroke-width="1"/></svg><div style="position:absolute;left:669px;top:240px;width:1243px;height:3px;background:#121212"></div><div style="position:absolute;left:1314px;top:112px;width:3px;height:131px;background:rgba(20,20,20,.55)"></div><div style="position:absolute;left:1315px;top:112px;width:1px;height:131px;background:#e8e8e8"></div><svg style="left:1309px;top:108px" width="13" height="14" viewBox="0 0 13 14"><path d="M2.5 1h8a1.5 1.5 0 0 1 1.5 1.5v4.5l-5.5 6-5.5-6V2.5A1.5 1.5 0 0 1 2.5 1z" fill="#d8d8d8"/></svg><div style="position:absolute;left:0px;top:243px;width:5px;height:564px;background:#4d4d4d"></div><div style="position:absolute;left:0px;top:500px;width:5px;height:1px;background:#222"></div><div style="position:absolute;left:0px;top:529px;width:5px;height:1px;background:#222"></div><div style="position:absolute;left:5px;top:243px;width:1910px;height:564px;background:#6b6b6b;box-shadow:-1px 0 0 #3a3a3a"></div><div style="position:absolute;left:5px;top:243px;width:1910px;height:16px;background:linear-gradient(#c3c3c3,#b5b5b5);border-top-left-radius:4px;box-shadow:inset 0 1px 0 #d2d2d2"></div><div style="position:absolute;left:5px;top:258px;width:1910px;height:1px;background:#8a8a8a"></div><div class="t" style="left:5px;width:1910px;text-align:center;top:246px;font-size:11px;color:#262626;padding-left:12px;letter-spacing:.1px">Remove Silence</div><div style="position:absolute;left:25px;top:279px;width:1870px;height:320px;background:#3c3c3c;border-top:1px solid #333;border-bottom:1px solid #2a2a2a"></div><div class="t" style="right:1862px;top:284.8px;font-size:11.5px;color:#3d9bf5">100</div><div style="position:absolute;left:55px;top:290px;width:3px;height:1px;background:#3d9bf5"></div><div class="t" style="right:1862px;top:314.8px;font-size:11.5px;color:#3d9bf5">80</div><div style="position:absolute;left:55px;top:320px;width:3px;height:1px;background:#3d9bf5"></div><div class="t" style="right:1862px;top:344.8px;font-size:11.5px;color:#3d9bf5">60</div><div style="position:absolute;left:55px;top:350px;width:3px;height:1px;background:#3d9bf5"></div><div class="t" style="right:1862px;top:374.8px;font-size:11.5px;color:#3d9bf5">40</div><div style="position:absolute;left:55px;top:380px;width:3px;height:1px;background:#3d9bf5"></div><div class="t" style="right:1862px;top:404.8px;font-size:11.5px;color:#3d9bf5">20</div><div style="position:absolute;left:55px;top:410px;width:3px;height:1px;background:#3d9bf5"></div><div class="t" style="right:1862px;top:434.8px;font-size:11.5px;color:#3d9bf5">0</div><div style="position:absolute;left:55px;top:440px;width:3px;height:1px;background:#3d9bf5"></div><div class="t" style="right:1862px;top:464.8px;font-size:11.5px;color:#3d9bf5">-20</div><div style="position:absolute;left:55px;top:470px;width:3px;height:1px;background:#3d9bf5"></div><div class="t" style="right:1862px;top:494.8px;font-size:11.5px;color:#3d9bf5">-40</div><div style="position:absolute;left:55px;top:500px;width:3px;height:1px;background:#3d9bf5"></div><div class="t" style="right:1862px;top:524.8px;font-size:11.5px;color:#3d9bf5">-60</div><div style="position:absolute;left:55px;top:530px;width:3px;height:1px;background:#3d9bf5"></div><div class="t" style="right:1862px;top:554.8px;font-size:11.5px;color:#3d9bf5">-80</div><div style="position:absolute;left:55px;top:560px;width:3px;height:1px;background:#3d9bf5"></div><div class="t" style="right:1862px;top:584.8px;font-size:11.5px;color:#3d9bf5">-100</div><div style="position:absolute;left:55px;top:590px;width:3px;height:1px;background:#3d9bf5"></div><div style="position:absolute;left:154px;top:289px;width:247px;height:302px;border:1px solid #3d9bf5"></div><div style="position:absolute;left:580px;top:289px;width:248px;height:302px;border:1px solid #3d9bf5"></div><div style="position:absolute;left:1015px;top:289px;width:240px;height:302px;border:1px solid #3d9bf5"></div><div style="position:absolute;left:1427px;top:289px;width:250px;height:302px;border:1px solid #3d9bf5"></div><svg style="left:0;top:0" width="1915" height="807"><path d="M154 436.5h1V444.8h-1zM155 430.9h1V449.6h-1zM156 434.2h1V461.4h-1zM157 398.4h1V466.0h-1zM158 419.8h1V475.9h-1zM159 397.9h1V477.7h-1zM160 392.1h1V476.2h-1zM161 398.8h1V466.0h-1zM162 399.3h1V482.4h-1zM163 396.7h1V487.4h-1zM164 394.6h1V488.3h-1zM165 385.5h1V514.9h-1zM166 381.5h1V497.7h-1zM167 384.1h1V505.5h-1zM168 378.0h1V510.1h-1zM169 365.7h1V534.9h-1zM170 372.0h1V534.9h-1zM171 365.4h1V530.1h-1zM172 368.2h1V531.8h-1zM173 339.6h1V512.5h-1zM174 338.6h1V531.7h-1zM175 349.3h1V533.1h-1zM176 357.5h1V535.2h-1zM177 358.7h1V528.4h-1zM178 358.0h1V530.9h-1zM179 373.1h1V546.4h-1zM180 355.8h1V536.2h-1zM181 348.4h1V534.5h-1zM182 346.4h1V534.8h-1zM183 335.2h1V536.0h-1zM184 343.7h1V530.9h-1zM185 330.8h1V537.9h-1zM186 329.3h1V537.9h-1zM187 333.0h1V543.0h-1zM188 326.7h1V547.6h-1zM189 326.5h1V536.3h-1zM190 322.9h1V534.6h-1zM191 305.4h1V548.2h-1zM192 322.5h1V541.3h-1zM193 327.5h1V534.7h-1zM194 329.3h1V551.9h-1zM195 322.9h1V540.4h-1zM196 327.3h1V555.5h-1zM197 325.5h1V519.0h-1zM198 321.5h1V532.4h-1zM199 327.0h1V547.3h-1zM200 314.3h1V534.9h-1zM201 300.4h1V549.5h-1zM202 323.0h1V533.4h-1zM203 312.2h1V525.3h-1zM204 315.7h1V538.4h-1zM205 328.1h1V526.5h-1zM206 312.0h1V517.1h-1zM207 346.5h1V527.9h-1zM208 375.2h1V509.5h-1zM209 371.6h1V499.3h-1zM210 382.7h1V490.4h-1zM211 392.8h1V485.7h-1zM212 407.5h1V473.6h-1zM213 396.0h1V471.1h-1zM214 409.7h1V471.0h-1zM215 395.6h1V467.2h-1zM216 401.7h1V479.1h-1zM217 383.9h1V456.6h-1zM218 370.0h1V495.9h-1zM219 362.9h1V516.1h-1zM220 349.8h1V504.8h-1zM221 333.0h1V523.5h-1zM222 330.5h1V530.9h-1zM223 330.5h1V523.5h-1zM224 336.1h1V513.6h-1zM225 341.7h1V519.7h-1zM226 350.5h1V507.8h-1zM227 342.0h1V519.3h-1zM228 373.9h1V490.6h-1zM229 385.0h1V512.3h-1zM230 411.1h1V507.2h-1zM231 401.3h1V479.4h-1zM232 385.3h1V481.4h-1zM233 378.3h1V490.5h-1zM234 362.8h1V502.2h-1zM235 362.8h1V509.4h-1zM236 364.7h1V526.6h-1zM237 373.4h1V528.8h-1zM238 362.7h1V505.7h-1zM239 384.1h1V507.6h-1zM240 383.4h1V505.0h-1zM241 370.3h1V515.4h-1zM242 374.8h1V509.5h-1zM243 344.9h1V524.3h-1zM244 361.9h1V507.9h-1zM245 352.9h1V522.3h-1zM246 352.7h1V528.4h-1zM247 347.0h1V527.2h-1zM248 348.6h1V532.6h-1zM249 342.1h1V551.2h-1zM250 359.0h1V555.2h-1zM251 342.8h1V532.4h-1zM252 322.7h1V555.2h-1zM253 338.0h1V540.6h-1zM254 320.7h1V537.1h-1zM255 341.0h1V530.8h-1zM256 334.2h1V538.4h-1zM257 334.0h1V541.8h-1zM258 334.0h1V557.4h-1zM259 333.3h1V541.6h-1zM260 333.1h1V541.5h-1zM261 325.8h1V530.6h-1zM262 325.8h1V544.5h-1zM263 322.9h1V542.3h-1zM264 327.4h1V560.9h-1zM265 314.2h1V567.0h-1zM266 325.1h1V537.1h-1zM267 308.0h1V531.2h-1zM268 336.7h1V525.4h-1zM269 339.1h1V521.8h-1zM270 341.4h1V522.4h-1zM271 337.1h1V543.0h-1zM272 316.3h1V529.1h-1zM273 341.6h1V534.7h-1zM274 364.6h1V539.5h-1zM275 344.5h1V543.5h-1zM276 348.4h1V561.0h-1zM277 339.0h1V564.6h-1zM278 349.3h1V548.0h-1zM279 353.7h1V560.2h-1zM280 350.3h1V562.0h-1zM281 351.5h1V549.0h-1zM282 355.9h1V561.1h-1zM283 349.5h1V531.8h-1zM284 357.8h1V510.7h-1zM285 349.2h1V513.1h-1zM286 371.4h1V505.7h-1zM287 361.7h1V496.8h-1zM288 391.4h1V494.7h-1zM289 405.2h1V497.1h-1zM290 416.2h1V486.3h-1zM291 420.5h1V479.8h-1zM292 381.7h1V484.2h-1zM293 395.8h1V504.8h-1zM294 386.9h1V484.9h-1zM295 387.7h1V498.8h-1zM296 382.3h1V495.3h-1zM297 372.9h1V497.1h-1zM298 363.6h1V479.4h-1zM299 357.0h1V517.7h-1zM300 335.4h1V515.2h-1zM301 344.9h1V515.4h-1zM302 328.1h1V520.6h-1zM303 340.3h1V517.8h-1zM304 337.3h1V521.3h-1zM305 317.4h1V518.2h-1zM306 310.8h1V522.5h-1zM307 318.1h1V531.2h-1zM308 302.6h1V522.0h-1zM309 294.7h1V527.2h-1zM310 328.1h1V529.1h-1zM311 333.0h1V508.8h-1zM312 338.0h1V499.7h-1zM313 325.1h1V498.5h-1zM314 352.1h1V477.8h-1zM315 360.9h1V499.9h-1zM316 365.0h1V501.5h-1zM317 387.7h1V504.7h-1zM318 372.9h1V509.1h-1zM319 372.8h1V484.9h-1zM320 371.5h1V487.8h-1zM321 393.4h1V492.8h-1zM322 400.7h1V485.6h-1zM323 380.3h1V487.2h-1zM324 390.3h1V493.1h-1zM325 379.9h1V503.1h-1zM326 397.9h1V503.6h-1zM327 355.8h1V513.9h-1zM328 364.5h1V512.8h-1zM329 364.9h1V510.9h-1zM330 362.1h1V516.3h-1zM331 357.8h1V518.3h-1zM332 349.9h1V514.4h-1zM333 348.2h1V514.9h-1zM334 348.2h1V518.7h-1zM335 321.3h1V518.7h-1zM336 330.3h1V499.9h-1zM337 336.8h1V538.5h-1zM338 338.4h1V527.8h-1zM339 333.3h1V527.1h-1zM340 337.1h1V525.8h-1zM341 338.7h1V527.5h-1zM342 344.3h1V528.0h-1zM343 345.9h1V528.4h-1zM344 353.7h1V528.1h-1zM345 355.4h1V526.3h-1zM346 355.7h1V537.5h-1zM347 359.7h1V534.2h-1zM348 351.0h1V520.7h-1zM349 352.8h1V538.8h-1zM350 352.7h1V503.2h-1zM351 349.5h1V523.7h-1zM352 355.3h1V526.7h-1zM353 355.9h1V532.8h-1zM354 329.2h1V537.5h-1zM355 332.0h1V526.3h-1zM356 355.7h1V521.3h-1zM357 354.3h1V523.3h-1zM358 356.8h1V521.1h-1zM359 354.8h1V503.7h-1zM360 366.2h1V520.5h-1zM361 370.1h1V521.4h-1zM362 371.4h1V523.8h-1zM363 371.1h1V517.6h-1zM364 372.0h1V516.2h-1zM365 375.1h1V512.6h-1zM366 373.4h1V502.0h-1zM367 373.0h1V498.8h-1zM368 382.6h1V499.8h-1zM369 369.8h1V519.7h-1zM370 384.0h1V514.4h-1zM371 372.1h1V471.5h-1zM372 379.9h1V512.3h-1zM373 383.5h1V486.9h-1zM374 398.0h1V478.7h-1zM375 373.2h1V481.4h-1zM376 401.8h1V474.6h-1zM377 405.5h1V489.6h-1zM378 412.2h1V465.1h-1zM379 417.5h1V467.3h-1zM380 413.6h1V462.5h-1zM381 422.1h1V462.4h-1zM382 416.3h1V464.6h-1zM383 421.0h1V459.0h-1zM384 415.8h1V456.1h-1zM385 424.5h1V456.5h-1zM386 423.8h1V452.7h-1zM387 430.8h1V453.9h-1zM388 430.0h1V442.8h-1zM389 426.8h1V447.4h-1zM390 433.1h1V447.2h-1zM391 426.0h1V442.8h-1zM392 432.4h1V447.8h-1zM393 435.1h1V447.5h-1zM394 435.1h1V447.2h-1zM395 427.8h1V446.8h-1zM396 432.0h1V446.5h-1zM397 432.3h1V446.2h-1zM398 432.7h1V445.8h-1zM399 433.0h1V445.5h-1zM400 433.3h1V445.2h-1zM580 438.0h1V443.5h-1zM581 437.2h1V445.6h-1zM582 432.8h1V444.2h-1zM583 430.7h1V473.3h-1zM584 428.7h1V450.9h-1zM585 424.5h1V473.3h-1zM586 417.1h1V465.0h-1zM587 417.1h1V472.9h-1zM588 409.1h1V478.3h-1zM589 422.6h1V473.7h-1zM590 422.1h1V477.4h-1zM591 377.5h1V488.3h-1zM592 394.8h1V487.1h-1zM593 383.3h1V493.8h-1zM594 395.1h1V493.8h-1zM595 390.5h1V503.1h-1zM596 377.3h1V527.4h-1zM597 371.9h1V512.0h-1zM598 359.6h1V515.8h-1zM599 356.9h1V543.5h-1zM600 332.3h1V528.0h-1zM601 351.8h1V531.5h-1zM602 328.0h1V531.3h-1zM603 333.6h1V533.6h-1zM604 330.7h1V539.8h-1zM605 330.4h1V544.9h-1zM606 306.9h1V534.5h-1zM607 330.3h1V558.2h-1zM608 335.7h1V542.0h-1zM609 339.6h1V538.8h-1zM610 337.8h1V537.0h-1zM611 338.0h1V535.2h-1zM612 336.8h1V535.6h-1zM613 325.6h1V538.1h-1zM614 337.0h1V537.6h-1zM615 329.7h1V530.9h-1zM616 340.7h1V548.5h-1zM617 336.1h1V535.7h-1zM618 338.9h1V519.1h-1zM619 339.9h1V535.5h-1zM620 342.5h1V529.3h-1zM621 343.1h1V532.6h-1zM622 343.9h1V529.6h-1zM623 342.2h1V546.2h-1zM624 337.6h1V530.4h-1zM625 341.4h1V530.1h-1zM626 341.1h1V527.4h-1zM627 337.6h1V546.0h-1zM628 343.3h1V527.2h-1zM629 350.9h1V518.9h-1zM630 358.3h1V510.8h-1zM631 367.8h1V497.5h-1zM632 381.5h1V491.0h-1zM633 391.5h1V481.5h-1zM634 386.0h1V479.3h-1zM635 406.2h1V475.0h-1zM636 406.6h1V472.1h-1zM637 409.5h1V475.2h-1zM638 411.7h1V471.0h-1zM639 412.0h1V474.3h-1zM640 387.8h1V469.6h-1zM641 407.4h1V482.1h-1zM642 391.3h1V488.4h-1zM643 398.2h1V497.8h-1zM644 376.5h1V502.9h-1zM645 358.6h1V507.9h-1zM646 344.5h1V539.7h-1zM647 311.0h1V524.6h-1zM648 329.5h1V539.8h-1zM649 330.4h1V544.7h-1zM650 330.1h1V567.8h-1zM651 328.7h1V543.6h-1zM652 324.8h1V564.4h-1zM653 329.5h1V549.1h-1zM654 323.9h1V550.0h-1zM655 336.5h1V546.0h-1zM656 326.4h1V557.2h-1zM657 334.4h1V539.0h-1zM658 330.4h1V552.2h-1zM659 338.5h1V528.4h-1zM660 329.7h1V529.9h-1zM661 337.5h1V531.5h-1zM662 340.4h1V533.5h-1zM663 341.2h1V536.4h-1zM664 327.5h1V538.8h-1zM665 348.4h1V531.6h-1zM666 345.0h1V522.3h-1zM667 353.5h1V512.2h-1zM668 362.0h1V508.9h-1zM669 379.5h1V492.3h-1zM670 366.8h1V515.9h-1zM671 366.9h1V504.8h-1zM672 367.0h1V510.4h-1zM673 366.6h1V499.2h-1zM674 366.1h1V528.3h-1zM675 365.6h1V516.4h-1zM676 370.2h1V516.6h-1zM677 380.6h1V517.2h-1zM678 408.8h1V492.3h-1zM679 388.8h1V487.8h-1zM680 393.9h1V485.8h-1zM681 406.7h1V480.6h-1zM682 397.8h1V473.4h-1zM683 394.1h1V470.4h-1zM684 370.7h1V496.6h-1zM685 356.7h1V494.8h-1zM686 332.3h1V511.1h-1zM687 338.4h1V497.0h-1zM688 344.6h1V512.5h-1zM689 344.7h1V522.7h-1zM690 338.4h1V525.2h-1zM691 337.6h1V539.1h-1zM692 335.2h1V547.5h-1zM693 314.0h1V555.5h-1zM694 325.8h1V532.8h-1zM695 307.5h1V540.6h-1zM696 322.1h1V563.7h-1zM697 294.4h1V566.2h-1zM698 312.6h1V564.7h-1zM699 312.9h1V547.8h-1zM700 309.6h1V550.9h-1zM701 312.9h1V545.9h-1zM702 316.1h1V545.2h-1zM703 319.5h1V558.2h-1zM704 317.1h1V542.6h-1zM705 322.0h1V538.4h-1zM706 320.0h1V531.3h-1zM707 326.3h1V529.2h-1zM708 326.0h1V527.2h-1zM709 339.8h1V513.0h-1zM710 337.4h1V515.9h-1zM711 347.4h1V522.6h-1zM712 347.0h1V514.4h-1zM713 356.0h1V529.6h-1zM714 384.5h1V504.6h-1zM715 370.4h1V493.5h-1zM716 376.0h1V494.8h-1zM717 372.0h1V500.5h-1zM718 372.8h1V502.2h-1zM719 401.7h1V501.4h-1zM720 387.1h1V479.5h-1zM721 405.9h1V482.1h-1zM722 406.0h1V481.1h-1zM723 409.8h1V483.2h-1zM724 385.7h1V474.0h-1zM725 405.7h1V472.6h-1zM726 371.0h1V486.4h-1zM727 371.9h1V497.8h-1zM728 375.9h1V508.9h-1zM729 347.6h1V510.1h-1zM730 332.6h1V509.7h-1zM731 317.1h1V514.2h-1zM732 334.7h1V513.7h-1zM733 328.7h1V509.7h-1zM734 306.8h1V522.4h-1zM735 333.8h1V519.5h-1zM736 309.0h1V520.9h-1zM737 330.7h1V515.3h-1zM738 329.0h1V522.1h-1zM739 330.0h1V524.1h-1zM740 348.7h1V523.9h-1zM741 368.6h1V514.1h-1zM742 385.0h1V492.4h-1zM743 395.9h1V515.4h-1zM744 371.5h1V502.3h-1zM745 346.3h1V485.7h-1zM746 359.8h1V491.1h-1zM747 364.8h1V517.2h-1zM748 357.9h1V501.2h-1zM749 343.8h1V510.2h-1zM750 355.7h1V527.8h-1zM751 348.3h1V525.2h-1zM752 358.0h1V520.0h-1zM753 360.8h1V533.0h-1zM754 358.8h1V529.3h-1zM755 362.4h1V526.3h-1zM756 364.8h1V533.7h-1zM757 342.4h1V546.5h-1zM758 367.1h1V540.4h-1zM759 367.2h1V526.1h-1zM760 346.2h1V551.5h-1zM761 347.6h1V525.6h-1zM762 359.1h1V531.8h-1zM763 360.3h1V542.9h-1zM764 338.6h1V535.4h-1zM765 355.8h1V519.8h-1zM766 354.3h1V522.8h-1zM767 343.9h1V521.7h-1zM768 352.0h1V538.4h-1zM769 349.7h1V526.5h-1zM770 351.5h1V526.1h-1zM771 364.0h1V523.8h-1zM772 355.9h1V525.4h-1zM773 354.7h1V526.9h-1zM774 355.6h1V526.9h-1zM775 355.0h1V526.0h-1zM776 355.1h1V522.9h-1zM777 354.8h1V529.0h-1zM778 345.6h1V525.8h-1zM779 366.7h1V520.8h-1zM780 376.0h1V524.5h-1zM781 388.3h1V520.3h-1zM782 392.0h1V520.0h-1zM783 390.2h1V518.0h-1zM784 383.4h1V535.2h-1zM785 386.2h1V533.2h-1zM786 369.7h1V507.0h-1zM787 383.6h1V500.6h-1zM788 386.3h1V496.6h-1zM789 381.5h1V502.7h-1zM790 384.2h1V506.3h-1zM791 359.4h1V502.7h-1zM792 388.7h1V510.9h-1zM793 406.8h1V506.1h-1zM794 395.3h1V525.4h-1zM795 400.6h1V499.6h-1zM796 391.1h1V493.6h-1zM797 409.9h1V479.8h-1zM798 386.3h1V477.0h-1zM799 411.9h1V478.7h-1zM800 410.4h1V483.3h-1zM801 383.8h1V469.2h-1zM802 406.4h1V471.1h-1zM803 410.1h1V468.5h-1zM804 420.7h1V466.8h-1zM805 435.5h1V467.5h-1zM806 436.0h1V463.8h-1zM807 421.0h1V464.7h-1zM808 422.3h1V460.9h-1zM809 413.9h1V458.0h-1zM810 411.9h1V458.2h-1zM811 405.3h1V460.2h-1zM812 411.8h1V456.5h-1zM813 405.1h1V450.8h-1zM814 409.6h1V453.5h-1zM815 421.1h1V469.6h-1zM816 422.5h1V448.1h-1zM817 399.8h1V465.5h-1zM818 415.7h1V447.2h-1zM819 428.1h1V459.1h-1zM820 427.6h1V443.4h-1zM821 428.8h1V445.8h-1zM822 430.2h1V448.4h-1zM823 423.4h1V447.6h-1zM824 432.5h1V447.1h-1zM825 433.3h1V447.7h-1zM826 434.1h1V457.6h-1zM827 434.8h1V448.0h-1zM1015 436.5h1V445.0h-1zM1016 436.5h1V445.0h-1zM1017 432.0h1V448.4h-1zM1018 415.1h1V455.9h-1zM1019 418.9h1V465.7h-1zM1020 400.8h1V481.9h-1zM1021 368.3h1V498.9h-1zM1022 373.5h1V515.8h-1zM1023 370.7h1V520.2h-1zM1024 375.1h1V521.8h-1zM1025 362.2h1V545.0h-1zM1026 365.2h1V526.9h-1zM1027 364.9h1V531.3h-1zM1028 355.8h1V527.6h-1zM1029 351.6h1V532.9h-1zM1030 353.8h1V529.1h-1zM1031 377.7h1V529.5h-1zM1032 361.4h1V526.3h-1zM1033 360.8h1V520.9h-1zM1034 359.6h1V517.2h-1zM1035 359.6h1V499.3h-1zM1036 366.1h1V531.9h-1zM1037 373.7h1V510.7h-1zM1038 392.2h1V523.5h-1zM1039 369.9h1V499.1h-1zM1040 407.5h1V490.9h-1zM1041 413.8h1V479.4h-1zM1042 414.3h1V484.0h-1zM1043 416.8h1V468.1h-1zM1044 402.4h1V461.1h-1zM1045 373.6h1V475.6h-1zM1046 360.6h1V507.9h-1zM1047 345.1h1V531.3h-1zM1048 341.7h1V533.0h-1zM1049 342.1h1V536.0h-1zM1050 336.6h1V535.8h-1zM1051 339.4h1V532.3h-1zM1052 336.8h1V532.3h-1zM1053 332.5h1V516.9h-1zM1054 331.8h1V533.7h-1zM1055 334.3h1V535.3h-1zM1056 359.4h1V555.7h-1zM1057 336.9h1V542.2h-1zM1058 339.6h1V558.4h-1zM1059 321.0h1V561.8h-1zM1060 346.7h1V544.6h-1zM1061 344.8h1V536.0h-1zM1062 347.8h1V515.9h-1zM1063 352.4h1V544.7h-1zM1064 351.4h1V527.4h-1zM1065 352.2h1V516.0h-1zM1066 369.3h1V521.4h-1zM1067 344.3h1V536.2h-1zM1068 356.3h1V520.8h-1zM1069 357.8h1V535.2h-1zM1070 350.9h1V528.2h-1zM1071 369.9h1V525.2h-1zM1072 325.3h1V539.5h-1zM1073 342.7h1V535.0h-1zM1074 330.7h1V540.9h-1zM1075 328.2h1V547.5h-1zM1076 343.0h1V547.9h-1zM1077 341.0h1V552.4h-1zM1078 342.5h1V559.5h-1zM1079 351.0h1V517.1h-1zM1080 361.3h1V515.7h-1zM1081 372.6h1V501.2h-1zM1082 403.6h1V489.8h-1zM1083 398.6h1V485.5h-1zM1084 399.2h1V508.2h-1zM1085 398.9h1V479.1h-1zM1086 414.2h1V481.8h-1zM1087 406.2h1V475.7h-1zM1088 382.9h1V472.0h-1zM1089 387.2h1V472.6h-1zM1090 406.5h1V490.3h-1zM1091 402.5h1V468.3h-1zM1092 410.0h1V486.9h-1zM1093 414.3h1V464.3h-1zM1094 412.9h1V468.6h-1zM1095 392.6h1V466.1h-1zM1096 394.6h1V472.2h-1zM1097 375.1h1V514.7h-1zM1098 357.6h1V521.1h-1zM1099 350.1h1V525.9h-1zM1100 340.4h1V531.8h-1zM1101 325.6h1V536.1h-1zM1102 321.4h1V541.1h-1zM1103 332.3h1V543.6h-1zM1104 338.6h1V548.7h-1zM1105 318.4h1V544.5h-1zM1106 331.0h1V546.6h-1zM1107 312.4h1V570.2h-1zM1108 336.5h1V549.6h-1zM1109 340.8h1V546.2h-1zM1110 342.5h1V548.5h-1zM1111 341.9h1V546.1h-1zM1112 345.6h1V515.1h-1zM1113 350.0h1V531.5h-1zM1114 353.3h1V518.2h-1zM1115 362.6h1V514.0h-1zM1116 365.7h1V489.0h-1zM1117 363.6h1V519.5h-1zM1118 358.7h1V503.5h-1zM1119 347.5h1V515.3h-1zM1120 337.1h1V524.2h-1zM1121 338.3h1V524.0h-1zM1122 335.5h1V524.1h-1zM1123 334.5h1V528.3h-1zM1124 333.1h1V530.4h-1zM1125 329.0h1V530.3h-1zM1126 326.0h1V552.6h-1zM1127 330.2h1V532.8h-1zM1128 332.9h1V529.9h-1zM1129 328.6h1V530.3h-1zM1130 326.1h1V547.1h-1zM1131 328.8h1V531.1h-1zM1132 328.4h1V525.4h-1zM1133 330.7h1V526.6h-1zM1134 327.2h1V524.5h-1zM1135 329.0h1V523.4h-1zM1136 329.1h1V525.1h-1zM1137 334.1h1V526.8h-1zM1138 346.9h1V521.2h-1zM1139 347.5h1V525.6h-1zM1140 365.9h1V517.6h-1zM1141 356.1h1V510.2h-1zM1142 375.3h1V497.2h-1zM1143 375.5h1V492.0h-1zM1144 404.4h1V485.2h-1zM1145 404.8h1V454.6h-1zM1146 427.6h1V466.9h-1zM1147 406.4h1V470.0h-1zM1148 408.3h1V464.5h-1zM1149 416.5h1V466.8h-1zM1150 417.8h1V460.1h-1zM1151 419.7h1V462.7h-1zM1152 395.5h1V475.0h-1zM1153 360.7h1V486.5h-1zM1154 336.4h1V502.7h-1zM1155 348.0h1V512.6h-1zM1156 383.7h1V518.3h-1zM1157 363.1h1V511.3h-1zM1158 367.7h1V488.4h-1zM1159 350.6h1V516.5h-1zM1160 370.7h1V501.3h-1zM1161 373.8h1V520.8h-1zM1162 370.8h1V508.4h-1zM1163 368.7h1V517.2h-1zM1164 367.3h1V516.6h-1zM1165 362.6h1V527.8h-1zM1166 361.8h1V520.4h-1zM1167 371.8h1V518.7h-1zM1168 387.5h1V518.1h-1zM1169 386.9h1V533.1h-1zM1170 393.5h1V513.2h-1zM1171 393.0h1V501.0h-1zM1172 413.1h1V498.9h-1zM1173 405.0h1V492.3h-1zM1174 379.5h1V485.1h-1zM1175 390.6h1V485.8h-1zM1176 365.8h1V476.1h-1zM1177 372.7h1V488.0h-1zM1178 390.9h1V491.7h-1zM1179 396.2h1V494.9h-1zM1180 378.5h1V499.5h-1zM1181 365.4h1V510.1h-1zM1182 354.7h1V517.1h-1zM1183 351.2h1V526.6h-1zM1184 345.9h1V552.9h-1zM1185 321.9h1V552.7h-1zM1186 339.1h1V534.2h-1zM1187 338.5h1V539.6h-1zM1188 337.2h1V546.6h-1zM1189 330.5h1V529.9h-1zM1190 329.4h1V532.2h-1zM1191 333.9h1V533.6h-1zM1192 341.2h1V531.2h-1zM1193 352.2h1V537.0h-1zM1194 353.6h1V556.2h-1zM1195 356.4h1V536.9h-1zM1196 353.6h1V538.4h-1zM1197 349.3h1V554.5h-1zM1198 332.3h1V528.5h-1zM1199 337.8h1V521.0h-1zM1200 336.3h1V512.7h-1zM1201 332.4h1V501.4h-1zM1202 312.3h1V501.1h-1zM1203 327.8h1V509.2h-1zM1204 332.3h1V515.5h-1zM1205 348.1h1V526.2h-1zM1206 358.9h1V533.9h-1zM1207 360.8h1V531.3h-1zM1208 362.0h1V525.8h-1zM1209 370.4h1V519.5h-1zM1210 361.0h1V516.3h-1zM1211 357.8h1V512.4h-1zM1212 362.7h1V507.2h-1zM1213 374.9h1V515.8h-1zM1214 377.5h1V495.1h-1zM1215 380.8h1V497.9h-1zM1216 386.8h1V510.4h-1zM1217 391.5h1V498.1h-1zM1218 391.0h1V495.2h-1zM1219 374.7h1V493.5h-1zM1220 378.8h1V477.6h-1zM1221 393.4h1V493.6h-1zM1222 368.2h1V495.4h-1zM1223 380.1h1V506.6h-1zM1224 392.9h1V489.2h-1zM1225 401.8h1V492.2h-1zM1226 403.3h1V474.0h-1zM1227 400.7h1V492.5h-1zM1228 401.3h1V491.2h-1zM1229 382.7h1V482.8h-1zM1230 404.3h1V482.9h-1zM1231 409.6h1V475.7h-1zM1232 397.7h1V494.2h-1zM1233 384.7h1V467.0h-1zM1234 406.4h1V486.2h-1zM1235 409.7h1V464.8h-1zM1236 417.3h1V483.6h-1zM1237 437.2h1V459.4h-1zM1238 417.5h1V455.6h-1zM1239 422.9h1V455.8h-1zM1240 437.2h1V451.9h-1zM1241 421.8h1V450.1h-1zM1242 432.1h1V447.7h-1zM1243 428.7h1V449.3h-1zM1244 417.4h1V443.3h-1zM1245 435.8h1V442.8h-1zM1246 432.9h1V447.1h-1zM1247 432.3h1V447.5h-1zM1248 430.6h1V446.8h-1zM1249 409.9h1V446.0h-1zM1250 434.3h1V445.2h-1zM1251 431.3h1V445.0h-1zM1252 437.2h1V445.0h-1zM1253 437.2h1V445.0h-1zM1254 432.3h1V445.0h-1zM1427 438.0h1V443.5h-1zM1428 438.0h1V443.5h-1zM1429 434.4h1V445.9h-1zM1430 429.5h1V447.4h-1zM1431 424.0h1V451.5h-1zM1432 408.0h1V475.1h-1zM1433 405.7h1V458.7h-1zM1434 410.7h1V456.2h-1zM1435 425.0h1V468.4h-1zM1436 402.0h1V481.8h-1zM1437 425.5h1V459.8h-1zM1438 398.3h1V463.1h-1zM1439 423.2h1V486.7h-1zM1440 419.7h1V468.3h-1zM1441 420.4h1V481.7h-1zM1442 419.4h1V466.1h-1zM1443 383.6h1V469.8h-1zM1444 390.4h1V470.2h-1zM1445 387.9h1V492.5h-1zM1446 362.0h1V511.8h-1zM1447 359.4h1V521.1h-1zM1448 349.6h1V524.4h-1zM1449 345.0h1V547.4h-1zM1450 331.6h1V537.1h-1zM1451 342.7h1V552.9h-1zM1452 338.9h1V547.7h-1zM1453 329.4h1V539.8h-1zM1454 327.4h1V536.4h-1zM1455 344.5h1V535.4h-1zM1456 346.0h1V545.1h-1zM1457 347.8h1V539.6h-1zM1458 344.7h1V539.9h-1zM1459 344.4h1V565.9h-1zM1460 349.5h1V563.4h-1zM1461 328.7h1V544.9h-1zM1462 342.8h1V556.7h-1zM1463 337.5h1V524.9h-1zM1464 335.2h1V535.0h-1zM1465 336.4h1V552.2h-1zM1466 335.3h1V543.0h-1zM1467 336.0h1V530.3h-1zM1468 333.5h1V530.9h-1zM1469 330.7h1V536.4h-1zM1470 355.1h1V532.7h-1zM1471 336.1h1V539.8h-1zM1472 329.7h1V540.5h-1zM1473 335.9h1V542.5h-1zM1474 331.9h1V561.0h-1zM1475 329.0h1V542.9h-1zM1476 332.3h1V545.0h-1zM1477 333.5h1V548.7h-1zM1478 328.0h1V548.6h-1zM1479 351.0h1V560.6h-1zM1480 332.5h1V534.0h-1zM1481 331.8h1V564.5h-1zM1482 323.5h1V542.5h-1zM1483 319.5h1V543.2h-1zM1484 354.1h1V533.9h-1zM1485 364.8h1V528.7h-1zM1486 371.4h1V498.9h-1zM1487 379.6h1V508.9h-1zM1488 390.8h1V510.8h-1zM1489 395.6h1V490.3h-1zM1490 374.5h1V484.1h-1zM1491 400.1h1V477.5h-1zM1492 400.8h1V475.1h-1zM1493 398.9h1V473.3h-1zM1494 397.4h1V494.6h-1zM1495 409.9h1V471.0h-1zM1496 404.5h1V476.6h-1zM1497 388.7h1V484.3h-1zM1498 391.0h1V489.4h-1zM1499 387.0h1V506.4h-1zM1500 375.6h1V515.9h-1zM1501 365.7h1V523.7h-1zM1502 352.5h1V530.2h-1zM1503 320.7h1V546.6h-1zM1504 338.1h1V542.8h-1zM1505 330.5h1V552.1h-1zM1506 322.7h1V551.6h-1zM1507 318.2h1V550.6h-1zM1508 321.5h1V549.3h-1zM1509 301.9h1V546.4h-1zM1510 320.1h1V529.1h-1zM1511 321.1h1V548.1h-1zM1512 327.6h1V547.5h-1zM1513 343.1h1V542.6h-1zM1514 324.5h1V547.6h-1zM1515 332.9h1V541.5h-1zM1516 333.4h1V546.8h-1zM1517 332.8h1V545.7h-1zM1518 337.5h1V522.7h-1zM1519 314.9h1V547.9h-1zM1520 320.7h1V551.9h-1zM1521 342.3h1V545.2h-1zM1522 344.5h1V569.3h-1zM1523 332.2h1V548.6h-1zM1524 335.0h1V540.9h-1zM1525 344.1h1V535.7h-1zM1526 339.8h1V531.4h-1zM1527 357.2h1V529.6h-1zM1528 343.4h1V528.8h-1zM1529 342.2h1V537.4h-1zM1530 322.2h1V522.0h-1zM1531 345.4h1V524.9h-1zM1532 342.9h1V541.8h-1zM1533 362.3h1V512.4h-1zM1534 343.8h1V512.2h-1zM1535 365.5h1V525.0h-1zM1536 355.2h1V502.8h-1zM1537 335.7h1V534.0h-1zM1538 347.5h1V517.8h-1zM1539 346.3h1V534.0h-1zM1540 341.2h1V525.1h-1zM1541 337.6h1V534.4h-1zM1542 341.2h1V544.1h-1zM1543 344.5h1V550.8h-1zM1544 340.3h1V538.4h-1zM1545 335.1h1V544.1h-1zM1546 339.2h1V543.1h-1zM1547 332.6h1V542.9h-1zM1548 334.4h1V547.4h-1zM1549 335.7h1V547.6h-1zM1550 317.9h1V558.1h-1zM1551 339.2h1V562.9h-1zM1552 364.6h1V559.5h-1zM1553 350.1h1V569.2h-1zM1554 341.3h1V556.5h-1zM1555 320.8h1V574.2h-1zM1556 335.2h1V546.0h-1zM1557 333.8h1V545.1h-1zM1558 315.0h1V540.4h-1zM1559 309.0h1V536.1h-1zM1560 329.8h1V530.5h-1zM1561 342.8h1V532.0h-1zM1562 343.6h1V523.7h-1zM1563 343.3h1V525.1h-1zM1564 349.0h1V511.3h-1zM1565 358.4h1V506.5h-1zM1566 360.3h1V503.0h-1zM1567 378.0h1V495.2h-1zM1568 376.5h1V486.3h-1zM1569 404.7h1V483.8h-1zM1570 405.1h1V478.9h-1zM1571 405.6h1V489.9h-1zM1572 403.2h1V486.2h-1zM1573 392.5h1V472.4h-1zM1574 409.1h1V466.4h-1zM1575 413.7h1V469.1h-1zM1576 427.7h1V459.9h-1zM1577 399.3h1V477.3h-1zM1578 385.7h1V490.3h-1zM1579 381.3h1V499.5h-1zM1580 374.0h1V503.4h-1zM1581 369.7h1V499.5h-1zM1582 357.9h1V504.0h-1zM1583 365.4h1V500.2h-1zM1584 367.9h1V504.0h-1zM1585 366.5h1V502.3h-1zM1586 372.2h1V513.3h-1zM1587 376.5h1V500.4h-1zM1588 364.7h1V505.0h-1zM1589 374.9h1V518.0h-1zM1590 363.4h1V511.0h-1zM1591 380.8h1V510.1h-1zM1592 380.7h1V516.8h-1zM1593 378.5h1V506.5h-1zM1594 381.5h1V502.6h-1zM1595 383.6h1V496.7h-1zM1596 365.9h1V496.3h-1zM1597 392.4h1V488.7h-1zM1598 391.8h1V488.5h-1zM1599 397.0h1V481.8h-1zM1600 388.6h1V485.6h-1zM1601 388.3h1V489.4h-1zM1602 385.0h1V518.3h-1zM1603 379.7h1V524.4h-1zM1604 374.8h1V502.9h-1zM1605 366.2h1V504.4h-1zM1606 373.6h1V504.7h-1zM1607 373.0h1V506.2h-1zM1608 358.7h1V501.5h-1zM1609 359.7h1V493.1h-1zM1610 379.2h1V522.1h-1zM1611 377.1h1V520.6h-1zM1612 371.7h1V478.2h-1zM1613 347.4h1V500.8h-1zM1614 361.2h1V508.4h-1zM1615 361.7h1V506.6h-1zM1616 340.4h1V509.6h-1zM1617 359.5h1V515.6h-1zM1618 366.6h1V513.3h-1zM1619 368.9h1V505.2h-1zM1620 372.8h1V488.3h-1zM1621 380.2h1V497.1h-1zM1622 383.6h1V499.1h-1zM1623 386.5h1V517.4h-1zM1624 388.9h1V500.7h-1zM1625 385.9h1V501.9h-1zM1626 381.9h1V502.1h-1zM1627 377.9h1V518.9h-1zM1628 371.9h1V503.5h-1zM1629 365.9h1V496.9h-1zM1630 365.1h1V520.2h-1zM1631 353.3h1V502.7h-1zM1632 347.9h1V498.8h-1zM1633 366.1h1V500.7h-1zM1634 359.8h1V502.4h-1zM1635 371.4h1V505.0h-1zM1636 373.3h1V511.5h-1zM1637 371.1h1V496.2h-1zM1638 370.6h1V497.3h-1zM1639 374.0h1V488.4h-1zM1640 377.7h1V490.1h-1zM1641 361.6h1V487.3h-1zM1642 382.9h1V479.5h-1zM1643 369.6h1V461.4h-1zM1644 390.1h1V476.0h-1zM1645 393.5h1V476.6h-1zM1646 395.1h1V479.1h-1zM1647 399.9h1V480.8h-1zM1648 397.9h1V474.2h-1zM1649 403.7h1V473.6h-1zM1650 403.6h1V470.0h-1zM1651 416.1h1V461.8h-1zM1652 397.7h1V462.6h-1zM1653 425.5h1V464.1h-1zM1654 419.0h1V470.5h-1zM1655 415.8h1V460.6h-1zM1656 417.1h1V462.0h-1zM1657 429.7h1V460.4h-1zM1658 418.9h1V456.4h-1zM1659 421.4h1V453.9h-1zM1660 406.2h1V456.5h-1zM1661 429.4h1V458.0h-1zM1662 425.0h1V457.3h-1zM1663 426.8h1V456.2h-1zM1664 431.5h1V450.2h-1zM1665 425.8h1V454.3h-1zM1666 432.0h1V452.5h-1zM1667 429.6h1V450.3h-1zM1668 434.3h1V450.9h-1zM1669 434.2h1V444.0h-1zM1670 432.6h1V461.2h-1zM1671 429.6h1V447.8h-1zM1672 421.8h1V446.4h-1zM1673 437.2h1V447.6h-1zM1674 421.2h1V442.8h-1zM1675 436.7h1V442.8h-1zM1676 436.2h1V448.0h-1z" fill="#3d9bf5"/></svg><svg style="left:0;top:0" width="1915" height="807"><defs><pattern id="dots" width="4" height="2" patternUnits="userSpaceOnUse"><rect x="1" width="1" height="1" fill="#3d9bf5"/><rect x="3" y="1" width="1" height="1" fill="#3d9bf5"/></pattern></defs><path d="M61 439h1V442h-1zM62 438h1V443h-1zM63 438h1V443h-1zM64 438h1V443h-1zM65 438h1V443h-1zM66 439h1V442h-1zM67 439h1V442h-1zM68 438h1V443h-1zM69 438h1V443h-1zM70 439h1V442h-1zM71 438h1V443h-1zM72 438h1V443h-1zM73 438h1V443h-1zM74 438h1V443h-1zM75 438h1V443h-1zM76 439h1V442h-1zM77 438h1V443h-1zM78 438h1V443h-1zM79 438h1V443h-1zM80 438h1V443h-1zM81 438h1V443h-1zM82 439h1V442h-1zM83 438h1V443h-1zM84 438h1V443h-1zM85 438h1V443h-1zM86 439h1V442h-1zM87 438h1V443h-1zM88 438h1V443h-1zM89 438h1V443h-1zM90 438h1V443h-1zM91 438h1V443h-1zM92 438h1V443h-1zM93 438h1V443h-1zM94 438h1V443h-1zM95 438h1V443h-1zM96 438h1V443h-1zM97 438h1V443h-1zM98 439h1V442h-1zM99 439h1V442h-1zM100 439h1V442h-1zM101 438h1V443h-1zM102 438h1V443h-1zM103 438h1V443h-1zM104 438h1V443h-1zM105 438h1V443h-1zM106 438h1V443h-1zM107 438h1V443h-1zM108 438h1V443h-1zM109 438h1V443h-1zM110 438h1V443h-1zM111 438h1V443h-1zM112 438h1V443h-1zM113 438h1V443h-1zM114 438h1V443h-1zM115 438h1V443h-1zM116 439h1V442h-1zM117 438h1V443h-1zM118 438h1V443h-1zM119 438h1V443h-1zM120 438h1V443h-1zM121 438h1V443h-1zM122 438h1V443h-1zM123 438h1V443h-1zM124 438h1V443h-1zM125 438h1V443h-1zM126 439h1V442h-1zM127 438h1V443h-1zM128 437h1V444h-1zM129 438h1V443h-1zM130 438h1V443h-1zM131 438h1V443h-1zM132 438h1V443h-1zM133 438h1V443h-1zM134 437h1V444h-1zM135 437h1V444h-1zM136 438h1V443h-1zM137 438h1V443h-1zM138 438h1V443h-1zM139 437h1V444h-1zM140 438h1V443h-1zM141 437h1V444h-1zM142 437h1V444h-1zM143 437h1V444h-1zM144 437h1V444h-1zM145 437h1V444h-1zM146 437h1V444h-1zM147 437h1V444h-1zM148 437h1V444h-1zM149 437h1V444h-1zM150 436h1V445h-1zM151 436h1V445h-1zM152 436h1V445h-1zM153 436h1V445h-1zM401 435h1V446h-1zM402 436h1V445h-1zM403 436h1V445h-1zM404 436h1V445h-1zM405 437h1V444h-1zM406 437h1V444h-1zM407 437h1V444h-1zM408 437h1V444h-1zM409 437h1V444h-1zM410 437h1V444h-1zM411 437h1V444h-1zM412 437h1V444h-1zM413 437h1V444h-1zM414 438h1V443h-1zM415 437h1V444h-1zM416 438h1V443h-1zM417 438h1V443h-1zM418 437h1V444h-1zM419 438h1V443h-1zM420 438h1V443h-1zM421 438h1V443h-1zM422 438h1V443h-1zM423 438h1V443h-1zM424 439h1V442h-1zM425 438h1V443h-1zM426 438h1V443h-1zM427 439h1V442h-1zM428 438h1V443h-1zM429 438h1V443h-1zM430 438h1V443h-1zM431 438h1V443h-1zM432 438h1V443h-1zM433 438h1V443h-1zM434 439h1V442h-1zM435 439h1V442h-1zM436 438h1V443h-1zM437 438h1V443h-1zM438 438h1V443h-1zM439 438h1V443h-1zM440 438h1V443h-1zM441 438h1V443h-1zM442 438h1V443h-1zM443 438h1V443h-1zM444 438h1V443h-1zM445 438h1V443h-1zM446 438h1V443h-1zM447 438h1V443h-1zM448 438h1V443h-1zM449 439h1V442h-1zM450 438h1V443h-1zM451 438h1V443h-1zM452 438h1V443h-1zM453 439h1V442h-1zM454 438h1V443h-1zM455 439h1V442h-1zM456 439h1V442h-1zM457 438h1V443h-1zM458 438h1V443h-1zM459 439h1V442h-1zM460 438h1V443h-1zM461 438h1V443h-1zM462 438h1V443h-1zM463 438h1V443h-1zM464 438h1V443h-1zM465 439h1V442h-1zM466 438h1V443h-1zM467 438h1V443h-1zM468 438h1V443h-1zM469 438h1V443h-1zM470 439h1V442h-1zM471 439h1V442h-1zM472 438h1V443h-1zM473 439h1V442h-1zM474 438h1V443h-1zM475 438h1V443h-1zM476 439h1V442h-1zM477 438h1V443h-1zM478 438h1V443h-1zM479 438h1V443h-1zM480 438h1V443h-1zM481 438h1V443h-1zM482 439h1V442h-1zM483 438h1V443h-1zM484 438h1V443h-1zM485 438h1V443h-1zM486 438h1V443h-1zM487 438h1V443h-1zM488 438h1V443h-1zM489 438h1V443h-1zM490 438h1V443h-1zM491 439h1V442h-1zM492 439h1V442h-1zM493 438h1V443h-1zM494 438h1V443h-1zM495 438h1V443h-1zM496 438h1V443h-1zM497 438h1V443h-1zM498 438h1V443h-1zM499 439h1V442h-1zM500 438h1V443h-1zM501 438h1V443h-1zM502 438h1V443h-1zM503 438h1V443h-1zM504 438h1V443h-1zM505 438h1V443h-1zM506 439h1V442h-1zM507 439h1V442h-1zM508 438h1V443h-1zM509 438h1V443h-1zM510 438h1V443h-1zM511 439h1V442h-1zM512 438h1V443h-1zM513 438h1V443h-1zM514 438h1V443h-1zM515 438h1V443h-1zM516 438h1V443h-1zM517 438h1V443h-1zM518 439h1V442h-1zM519 438h1V443h-1zM520 439h1V442h-1zM521 438h1V443h-1zM522 438h1V443h-1zM523 438h1V443h-1zM524 438h1V443h-1zM525 438h1V443h-1zM526 438h1V443h-1zM527 438h1V443h-1zM528 438h1V443h-1zM529 438h1V443h-1zM530 438h1V443h-1zM531 438h1V443h-1zM532 438h1V443h-1zM533 439h1V442h-1zM534 438h1V443h-1zM535 438h1V443h-1zM536 439h1V442h-1zM537 438h1V443h-1zM538 438h1V443h-1zM539 438h1V443h-1zM540 438h1V443h-1zM541 439h1V442h-1zM542 438h1V443h-1zM543 438h1V443h-1zM544 439h1V442h-1zM545 438h1V443h-1zM546 438h1V443h-1zM547 438h1V443h-1zM548 438h1V443h-1zM549 438h1V443h-1zM550 438h1V443h-1zM551 439h1V442h-1zM552 439h1V442h-1zM553 438h1V443h-1zM554 438h1V443h-1zM555 438h1V443h-1zM556 437h1V444h-1zM557 437h1V444h-1zM558 438h1V443h-1zM559 438h1V443h-1zM560 438h1V443h-1zM561 438h1V443h-1zM562 438h1V443h-1zM563 438h1V443h-1zM564 438h1V443h-1zM565 438h1V443h-1zM566 438h1V443h-1zM567 438h1V443h-1zM568 438h1V443h-1zM569 437h1V444h-1zM570 437h1V444h-1zM571 437h1V444h-1zM572 437h1V444h-1zM573 437h1V444h-1zM574 437h1V444h-1zM575 436h1V445h-1zM576 436h1V445h-1zM577 436h1V445h-1zM578 436h1V445h-1zM579 436h1V445h-1zM828 436h1V445h-1zM829 436h1V445h-1zM830 436h1V445h-1zM831 436h1V445h-1zM832 437h1V444h-1zM833 436h1V445h-1zM834 437h1V444h-1zM835 437h1V444h-1zM836 437h1V444h-1zM837 437h1V444h-1zM838 438h1V443h-1zM839 437h1V444h-1zM840 438h1V443h-1zM841 437h1V444h-1zM842 437h1V444h-1zM843 438h1V443h-1zM844 437h1V444h-1zM845 437h1V444h-1zM846 438h1V443h-1zM847 438h1V443h-1zM848 438h1V443h-1zM849 438h1V443h-1zM850 438h1V443h-1zM851 437h1V444h-1zM852 438h1V443h-1zM853 438h1V443h-1zM854 438h1V443h-1zM855 438h1V443h-1zM856 439h1V442h-1zM857 438h1V443h-1zM858 439h1V442h-1zM859 439h1V442h-1zM860 438h1V443h-1zM861 439h1V442h-1zM862 439h1V442h-1zM863 439h1V442h-1zM864 438h1V443h-1zM865 439h1V442h-1zM866 439h1V442h-1zM867 438h1V443h-1zM868 439h1V442h-1zM869 438h1V443h-1zM870 438h1V443h-1zM871 438h1V443h-1zM872 438h1V443h-1zM873 438h1V443h-1zM874 438h1V443h-1zM875 439h1V442h-1zM876 438h1V443h-1zM877 438h1V443h-1zM878 438h1V443h-1zM879 439h1V442h-1zM880 438h1V443h-1zM881 438h1V443h-1zM882 439h1V442h-1zM883 438h1V443h-1zM884 438h1V443h-1zM885 438h1V443h-1zM886 439h1V442h-1zM887 439h1V442h-1zM888 438h1V443h-1zM889 438h1V443h-1zM890 438h1V443h-1zM891 438h1V443h-1zM892 438h1V443h-1zM893 438h1V443h-1zM894 438h1V443h-1zM895 438h1V443h-1zM896 439h1V442h-1zM897 438h1V443h-1zM898 438h1V443h-1zM899 438h1V443h-1zM900 438h1V443h-1zM901 439h1V442h-1zM902 438h1V443h-1zM903 438h1V443h-1zM904 438h1V443h-1zM905 438h1V443h-1zM906 438h1V443h-1zM907 438h1V443h-1zM908 438h1V443h-1zM909 439h1V442h-1zM910 439h1V442h-1zM911 438h1V443h-1zM912 438h1V443h-1zM913 438h1V443h-1zM914 438h1V443h-1zM915 438h1V443h-1zM916 439h1V442h-1zM917 438h1V443h-1zM918 439h1V442h-1zM919 438h1V443h-1zM920 438h1V443h-1zM921 439h1V442h-1zM922 438h1V443h-1zM923 438h1V443h-1zM924 438h1V443h-1zM925 438h1V443h-1zM926 438h1V443h-1zM927 438h1V443h-1zM928 438h1V443h-1zM929 438h1V443h-1zM930 439h1V442h-1zM931 439h1V442h-1zM932 438h1V443h-1zM933 438h1V443h-1zM934 439h1V442h-1zM935 438h1V443h-1zM936 438h1V443h-1zM937 438h1V443h-1zM938 439h1V442h-1zM939 438h1V443h-1zM940 438h1V443h-1zM941 438h1V443h-1zM942 438h1V443h-1zM943 438h1V443h-1zM944 438h1V443h-1zM945 438h1V443h-1zM946 438h1V443h-1zM947 438h1V443h-1zM948 438h1V443h-1zM949 438h1V443h-1zM950 438h1V443h-1zM951 438h1V443h-1zM952 438h1V443h-1zM953 439h1V442h-1zM954 439h1V442h-1zM955 438h1V443h-1zM956 438h1V443h-1zM957 438h1V443h-1zM958 438h1V443h-1zM959 438h1V443h-1zM960 439h1V442h-1zM961 438h1V443h-1zM962 439h1V442h-1zM963 438h1V443h-1zM964 438h1V443h-1zM965 438h1V443h-1zM966 438h1V443h-1zM967 438h1V443h-1zM968 438h1V443h-1zM969 438h1V443h-1zM970 438h1V443h-1zM971 439h1V442h-1zM972 439h1V442h-1zM973 438h1V443h-1zM974 438h1V443h-1zM975 438h1V443h-1zM976 438h1V443h-1zM977 438h1V443h-1zM978 439h1V442h-1zM979 438h1V443h-1zM980 438h1V443h-1zM981 438h1V443h-1zM982 438h1V443h-1zM983 438h1V443h-1zM984 438h1V443h-1zM985 438h1V443h-1zM986 438h1V443h-1zM987 438h1V443h-1zM988 438h1V443h-1zM989 438h1V443h-1zM990 438h1V443h-1zM991 437h1V444h-1zM992 437h1V444h-1zM993 438h1V443h-1zM994 437h1V444h-1zM995 438h1V443h-1zM996 437h1V444h-1zM997 437h1V444h-1zM998 438h1V443h-1zM999 437h1V444h-1zM1000 437h1V444h-1zM1001 437h1V444h-1zM1002 438h1V443h-1zM1003 437h1V444h-1zM1004 437h1V444h-1zM1005 437h1V444h-1zM1006 437h1V444h-1zM1007 437h1V444h-1zM1008 437h1V444h-1zM1009 437h1V444h-1zM1010 436h1V445h-1zM1011 436h1V445h-1zM1012 436h1V445h-1zM1013 436h1V445h-1zM1014 435h1V446h-1zM1255 436h1V445h-1zM1256 436h1V445h-1zM1257 436h1V445h-1zM1258 436h1V445h-1zM1259 437h1V444h-1zM1260 436h1V445h-1zM1261 437h1V444h-1zM1262 437h1V444h-1zM1263 437h1V444h-1zM1264 437h1V444h-1zM1265 437h1V444h-1zM1266 437h1V444h-1zM1267 437h1V444h-1zM1268 438h1V443h-1zM1269 438h1V443h-1zM1270 438h1V443h-1zM1271 437h1V444h-1zM1272 437h1V444h-1zM1273 438h1V443h-1zM1274 438h1V443h-1zM1275 438h1V443h-1zM1276 438h1V443h-1zM1277 438h1V443h-1zM1278 437h1V444h-1zM1279 439h1V442h-1zM1280 438h1V443h-1zM1281 438h1V443h-1zM1282 438h1V443h-1zM1283 438h1V443h-1zM1284 438h1V443h-1zM1285 438h1V443h-1zM1286 438h1V443h-1zM1287 438h1V443h-1zM1288 438h1V443h-1zM1289 438h1V443h-1zM1290 439h1V442h-1zM1291 438h1V443h-1zM1292 439h1V442h-1zM1293 439h1V442h-1zM1294 438h1V443h-1zM1295 438h1V443h-1zM1296 439h1V442h-1zM1297 439h1V442h-1zM1298 438h1V443h-1zM1299 438h1V443h-1zM1300 438h1V443h-1zM1301 438h1V443h-1zM1302 438h1V443h-1zM1303 439h1V442h-1zM1304 438h1V443h-1zM1305 439h1V442h-1zM1306 438h1V443h-1zM1307 438h1V443h-1zM1308 439h1V442h-1zM1309 438h1V443h-1zM1310 438h1V443h-1zM1311 439h1V442h-1zM1312 438h1V443h-1zM1313 438h1V443h-1zM1314 438h1V443h-1zM1315 438h1V443h-1zM1316 438h1V443h-1zM1317 438h1V443h-1zM1318 438h1V443h-1zM1319 438h1V443h-1zM1320 438h1V443h-1zM1321 438h1V443h-1zM1322 438h1V443h-1zM1323 438h1V443h-1zM1324 438h1V443h-1zM1325 438h1V443h-1zM1326 439h1V442h-1zM1327 438h1V443h-1zM1328 438h1V443h-1zM1329 438h1V443h-1zM1330 438h1V443h-1zM1331 438h1V443h-1zM1332 439h1V442h-1zM1333 438h1V443h-1zM1334 439h1V442h-1zM1335 438h1V443h-1zM1336 438h1V443h-1zM1337 438h1V443h-1zM1338 438h1V443h-1zM1339 438h1V443h-1zM1340 438h1V443h-1zM1341 439h1V442h-1zM1342 438h1V443h-1zM1343 438h1V443h-1zM1344 439h1V442h-1zM1345 438h1V443h-1zM1346 439h1V442h-1zM1347 439h1V442h-1zM1348 438h1V443h-1zM1349 438h1V443h-1zM1350 438h1V443h-1zM1351 438h1V443h-1zM1352 438h1V443h-1zM1353 439h1V442h-1zM1354 438h1V443h-1zM1355 438h1V443h-1zM1356 438h1V443h-1zM1357 438h1V443h-1zM1358 438h1V443h-1zM1359 438h1V443h-1zM1360 438h1V443h-1zM1361 438h1V443h-1zM1362 438h1V443h-1zM1363 438h1V443h-1zM1364 438h1V443h-1zM1365 438h1V443h-1zM1366 439h1V442h-1zM1367 439h1V442h-1zM1368 439h1V442h-1zM1369 439h1V442h-1zM1370 439h1V442h-1zM1371 438h1V443h-1zM1372 438h1V443h-1zM1373 438h1V443h-1zM1374 438h1V443h-1zM1375 438h1V443h-1zM1376 438h1V443h-1zM1377 438h1V443h-1zM1378 438h1V443h-1zM1379 438h1V443h-1zM1380 439h1V442h-1zM1381 438h1V443h-1zM1382 438h1V443h-1zM1383 438h1V443h-1zM1384 438h1V443h-1zM1385 438h1V443h-1zM1386 438h1V443h-1zM1387 438h1V443h-1zM1388 439h1V442h-1zM1389 438h1V443h-1zM1390 438h1V443h-1zM1391 439h1V442h-1zM1392 438h1V443h-1zM1393 438h1V443h-1zM1394 438h1V443h-1zM1395 438h1V443h-1zM1396 438h1V443h-1zM1397 438h1V443h-1zM1398 439h1V442h-1zM1399 438h1V443h-1zM1400 438h1V443h-1zM1401 438h1V443h-1zM1402 438h1V443h-1zM1403 439h1V442h-1zM1404 438h1V443h-1zM1405 438h1V443h-1zM1406 438h1V443h-1zM1407 438h1V443h-1zM1408 438h1V443h-1zM1409 438h1V443h-1zM1410 438h1V443h-1zM1411 437h1V444h-1zM1412 438h1V443h-1zM1413 438h1V443h-1zM1414 437h1V444h-1zM1415 438h1V443h-1zM1416 437h1V444h-1zM1417 437h1V444h-1zM1418 438h1V443h-1zM1419 437h1V444h-1zM1420 437h1V444h-1zM1421 437h1V444h-1zM1422 436h1V445h-1zM1423 436h1V445h-1zM1424 436h1V445h-1zM1425 436h1V445h-1zM1426 436h1V445h-1zM1677 436h1V445h-1zM1678 436h1V445h-1zM1679 436h1V445h-1zM1680 437h1V444h-1zM1681 437h1V444h-1zM1682 436h1V445h-1zM1683 436h1V445h-1zM1684 437h1V444h-1zM1685 438h1V443h-1zM1686 438h1V443h-1zM1687 438h1V443h-1zM1688 438h1V443h-1zM1689 438h1V443h-1zM1690 438h1V443h-1zM1691 437h1V444h-1zM1692 437h1V444h-1zM1693 438h1V443h-1zM1694 437h1V444h-1zM1695 438h1V443h-1zM1696 437h1V444h-1zM1697 437h1V444h-1zM1698 437h1V444h-1zM1699 438h1V443h-1zM1700 438h1V443h-1zM1701 438h1V443h-1zM1702 437h1V444h-1zM1703 439h1V442h-1zM1704 438h1V443h-1zM1705 438h1V443h-1zM1706 439h1V442h-1zM1707 438h1V443h-1zM1708 438h1V443h-1zM1709 438h1V443h-1zM1710 438h1V443h-1zM1711 439h1V442h-1zM1712 438h1V443h-1zM1713 438h1V443h-1zM1714 438h1V443h-1zM1715 438h1V443h-1zM1716 438h1V443h-1zM1717 438h1V443h-1zM1718 438h1V443h-1zM1719 438h1V443h-1zM1720 438h1V443h-1zM1721 438h1V443h-1zM1722 438h1V443h-1zM1723 439h1V442h-1zM1724 438h1V443h-1zM1725 438h1V443h-1zM1726 438h1V443h-1zM1727 438h1V443h-1zM1728 438h1V443h-1zM1729 439h1V442h-1zM1730 438h1V443h-1zM1731 439h1V442h-1zM1732 438h1V443h-1zM1733 438h1V443h-1zM1734 438h1V443h-1zM1735 439h1V442h-1zM1736 439h1V442h-1zM1737 438h1V443h-1zM1738 438h1V443h-1zM1739 438h1V443h-1zM1740 438h1V443h-1zM1741 438h1V443h-1zM1742 438h1V443h-1zM1743 438h1V443h-1zM1744 438h1V443h-1zM1745 438h1V443h-1zM1746 439h1V442h-1zM1747 438h1V443h-1zM1748 438h1V443h-1zM1749 439h1V442h-1zM1750 438h1V443h-1zM1751 439h1V442h-1zM1752 439h1V442h-1zM1753 438h1V443h-1zM1754 439h1V442h-1zM1755 439h1V442h-1zM1756 439h1V442h-1zM1757 438h1V443h-1zM1758 438h1V443h-1zM1759 439h1V442h-1zM1760 432h1V448h-1zM1761 432h1V448h-1zM1762 439h1V442h-1zM1763 438h1V443h-1zM1764 438h1V443h-1zM1765 438h1V443h-1zM1766 438h1V443h-1zM1767 438h1V443h-1zM1768 438h1V443h-1zM1769 439h1V442h-1zM1770 439h1V442h-1zM1771 439h1V442h-1zM1772 438h1V443h-1zM1773 439h1V442h-1zM1774 439h1V442h-1zM1775 438h1V443h-1zM1776 439h1V442h-1zM1777 438h1V443h-1zM1778 439h1V442h-1zM1779 438h1V443h-1zM1780 439h1V442h-1zM1781 438h1V443h-1zM1782 438h1V443h-1zM1783 438h1V443h-1zM1784 432h1V448h-1zM1785 432h1V448h-1zM1786 438h1V443h-1zM1787 438h1V443h-1zM1788 438h1V443h-1zM1789 439h1V442h-1zM1790 438h1V443h-1zM1791 438h1V443h-1zM1792 438h1V443h-1zM1793 439h1V442h-1zM1794 438h1V443h-1zM1795 438h1V443h-1zM1796 438h1V443h-1zM1797 439h1V442h-1zM1798 438h1V443h-1zM1799 438h1V443h-1zM1800 439h1V442h-1zM1801 438h1V443h-1zM1802 438h1V443h-1zM1803 438h1V443h-1zM1804 438h1V443h-1zM1805 438h1V443h-1zM1806 439h1V442h-1zM1807 438h1V443h-1zM1808 438h1V443h-1zM1809 438h1V443h-1zM1810 438h1V443h-1zM1811 439h1V442h-1zM1812 439h1V442h-1zM1813 439h1V442h-1zM1814 438h1V443h-1zM1815 438h1V443h-1zM1816 438h1V443h-1zM1817 438h1V443h-1zM1818 438h1V443h-1zM1819 438h1V443h-1zM1820 438h1V443h-1zM1821 438h1V443h-1zM1822 438h1V443h-1zM1823 438h1V443h-1zM1824 438h1V443h-1zM1825 438h1V443h-1zM1826 438h1V443h-1zM1827 438h1V443h-1zM1828 438h1V443h-1zM1829 438h1V443h-1zM1830 438h1V443h-1zM1831 438h1V443h-1zM1832 439h1V442h-1zM1833 439h1V442h-1zM1834 438h1V443h-1zM1835 438h1V443h-1zM1836 438h1V443h-1zM1837 438h1V443h-1zM1838 439h1V442h-1zM1839 438h1V443h-1zM1840 438h1V443h-1zM1841 438h1V443h-1zM1842 438h1V443h-1zM1843 438h1V443h-1zM1844 438h1V443h-1zM1845 438h1V443h-1zM1846 439h1V442h-1zM1847 438h1V443h-1zM1848 438h1V443h-1zM1849 439h1V442h-1zM1850 439h1V442h-1zM1851 438h1V443h-1zM1852 438h1V443h-1zM1853 438h1V443h-1zM1854 438h1V443h-1zM1855 438h1V443h-1zM1856 438h1V443h-1zM1857 439h1V442h-1zM1858 438h1V443h-1zM1859 438h1V443h-1zM1860 438h1V443h-1zM1861 438h1V443h-1zM1862 438h1V443h-1zM1863 438h1V443h-1zM1864 438h1V443h-1zM1865 438h1V443h-1zM1866 438h1V443h-1zM1867 438h1V443h-1zM1868 438h1V443h-1zM1869 439h1V442h-1zM1870 438h1V443h-1zM1871 439h1V442h-1zM1872 439h1V442h-1zM1873 438h1V443h-1zM1874 438h1V443h-1zM1875 439h1V442h-1zM1876 439h1V442h-1zM1877 439h1V442h-1zM1878 438h1V443h-1zM1879 438h1V443h-1zM1880 438h1V443h-1zM1881 438h1V443h-1z" fill="url(#dots)"/></svg><div class="t" style="right:20px;top:608px;font-size:13px;color:#a9a9a9">4 Regions</div><div class="t" style="right:1672px;top:622px;font-size:13px;color:#cfcfcf;letter-spacing:.28px">Threshold:</div><div style="position:absolute;left:249px;top:618px;width:106px;height:21px;border-radius:4px;background:#3e3e3e;border:1px solid #333"></div><svg style="left:256px;top:626px" width="7" height="5" viewBox="0 0 7 5"><path d="M.5 .5l3 3 3-3" fill="none" stroke="#bbb" stroke-width=".9"/></svg><svg style="left:341px;top:625px" width="7" height="5" viewBox="0 0 7 5"><path d="M.5 4l3-3 3 3" fill="none" stroke="#bbb" stroke-width=".9"/></svg><div class="t" style="left:249px;width:106px;text-align:center;top:622px;font-size:13px;color:#f2f2f2;letter-spacing:.35px">-22</div><div class="t" style="left:361px;top:622px;font-size:13px;color:#cfcfcf;">dB</div><div class="t" style="right:1672px;top:649px;font-size:13px;color:#cfcfcf;letter-spacing:.28px">Minimum Time to accept as Silence:</div><div style="position:absolute;left:249px;top:645px;width:106px;height:21px;border-radius:4px;background:#3e3e3e;border:1px solid #333"></div><svg style="left:256px;top:653px" width="7" height="5" viewBox="0 0 7 5"><path d="M.5 .5l3 3 3-3" fill="none" stroke="#bbb" stroke-width=".9"/></svg><svg style="left:341px;top:652px" width="7" height="5" viewBox="0 0 7 5"><path d="M.5 4l3-3 3 3" fill="none" stroke="#bbb" stroke-width=".9"/></svg><div class="t" style="left:249px;width:106px;text-align:center;top:649px;font-size:13px;color:#f2f2f2;letter-spacing:.35px">0.1000</div><div class="t" style="left:361px;top:649px;font-size:13px;color:#cfcfcf;">sec</div><div class="t" style="right:1672px;top:676px;font-size:13px;color:#cfcfcf;letter-spacing:.28px">Pre Attack-Time:</div><div style="position:absolute;left:249px;top:672px;width:106px;height:21px;border-radius:4px;background:#3e3e3e;border:1px solid #333"></div><svg style="left:256px;top:680px" width="7" height="5" viewBox="0 0 7 5"><path d="M.5 .5l3 3 3-3" fill="none" stroke="#bbb" stroke-width=".9"/></svg><svg style="left:341px;top:679px" width="7" height="5" viewBox="0 0 7 5"><path d="M.5 4l3-3 3 3" fill="none" stroke="#bbb" stroke-width=".9"/></svg><div class="t" style="left:249px;width:106px;text-align:center;top:676px;font-size:13px;color:#f2f2f2;letter-spacing:.35px">0.0590</div><div class="t" style="left:361px;top:676px;font-size:13px;color:#cfcfcf;">sec</div><div class="t" style="right:1672px;top:703px;font-size:13px;color:#cfcfcf;letter-spacing:.28px">Post Release-Time:</div><div style="position:absolute;left:249px;top:699px;width:106px;height:21px;border-radius:4px;background:#3e3e3e;border:1px solid #333"></div><svg style="left:256px;top:707px" width="7" height="5" viewBox="0 0 7 5"><path d="M.5 .5l3 3 3-3" fill="none" stroke="#bbb" stroke-width=".9"/></svg><svg style="left:341px;top:706px" width="7" height="5" viewBox="0 0 7 5"><path d="M.5 4l3-3 3 3" fill="none" stroke="#bbb" stroke-width=".9"/></svg><div class="t" style="left:249px;width:106px;text-align:center;top:703px;font-size:13px;color:#f2f2f2;letter-spacing:.35px">0.0310</div><div class="t" style="left:361px;top:703px;font-size:13px;color:#cfcfcf;">sec</div><div style="position:absolute;left:250px;top:731px;width:14px;height:14px;border-radius:3px;background:#3a73c2;border:1px solid #2c5c9e"></div><svg style="left:252px;top:733px" width="10" height="10" viewBox="0 0 10 10"><path d="M1.8 5.3L4 7.8 8.5 1.5" fill="none" stroke="#fff" stroke-width="1.5"/></svg><div class="t" style="left:270px;top:731px;font-size:13px;color:#f2f2f2;letter-spacing:.2px">Search Zero Crossing</div><div style="position:absolute;left:1743px;top:765px;width:70px;height:21px;border-radius:4px;background:#3e3e3e;border:1px solid #2b2b2b"></div><div class="t" style="left:1743px;width:70px;text-align:center;top:769px;font-size:13px;color:#f5f5f5">Cancel</div><div style="position:absolute;left:1824px;top:764px;width:72px;height:23px;border-radius:5px;background:#3a6cad;border:1px solid #4f7fc6;box-shadow:0 0 0 1px #4a78bd"></div><div class="t" style="left:1824px;width:72px;text-align:center;top:769px;font-size:13px;color:#f5f5f5">OK</div></body></html>
